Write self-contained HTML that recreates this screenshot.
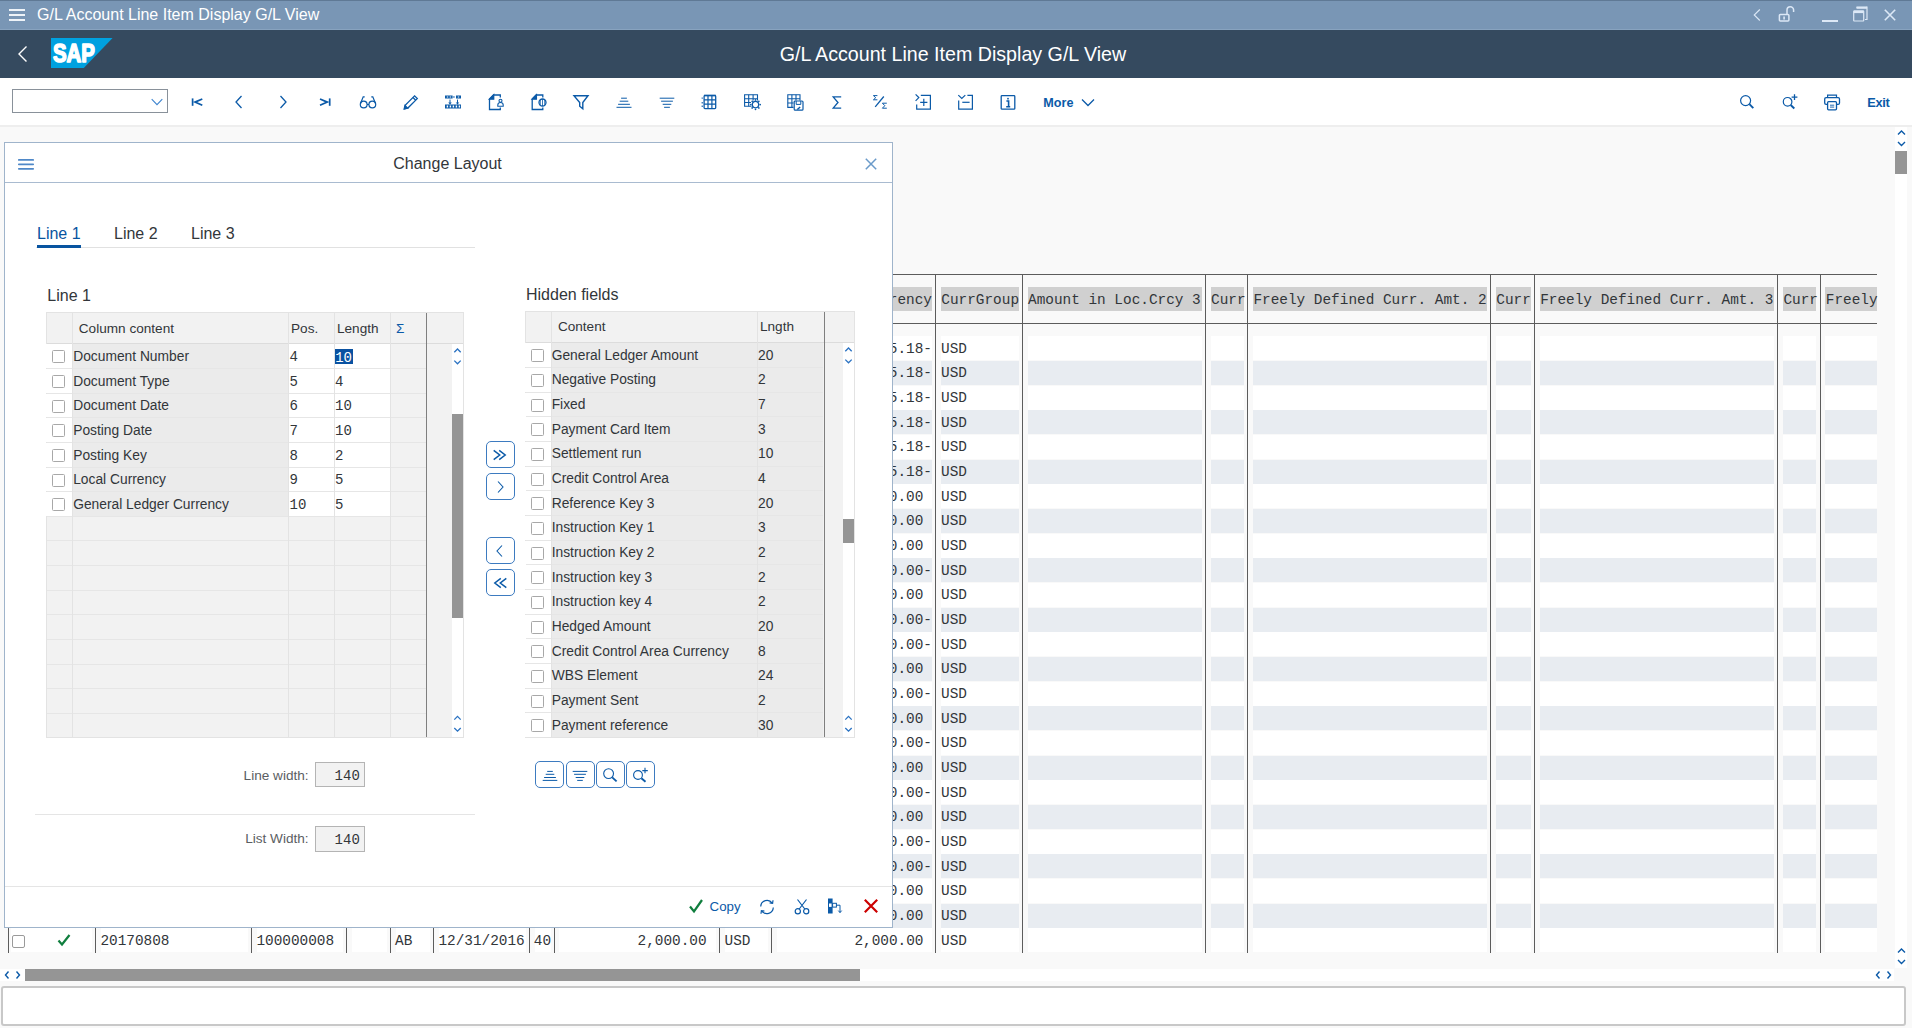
<!DOCTYPE html><html><head><meta charset="utf-8"><style>
html,body{margin:0;padding:0;width:1912px;height:1028px;overflow:hidden;background:#f9f9f9;position:relative}
.t{position:absolute;white-space:pre}
.b{position:absolute}
</style></head><body>
<div class="b" style="left:0.00px;top:0.00px;width:1912.00px;height:30.00px;background:#7996b5;"></div>
<div class="b" style="left:0.00px;top:0.00px;width:1912.00px;height:1.00px;background:#5f7995;"></div>
<div class="b" style="left:0.00px;top:29.00px;width:1912.00px;height:1.00px;background:#88a3bf;"></div>
<div class="b" style="left:9.00px;top:9.00px;width:16.00px;height:1.60px;background:#eef3f8;"></div>
<div class="b" style="left:9.00px;top:14.00px;width:16.00px;height:1.60px;background:#eef3f8;"></div>
<div class="b" style="left:9.00px;top:19.00px;width:16.00px;height:1.60px;background:#eef3f8;"></div>
<div class="t" style="left:37.00px;top:6.66px;font:normal 16px/16px 'Liberation Sans', sans-serif;color:#ffffff;">G/L Account Line Item Display G/L View</div>
<div class="b" style="left:0.00px;top:30.00px;width:1912.00px;height:48.00px;background:#354a5f;"></div>
<div class="t" style="left:453.00px;width:1000px;text-align:center;top:44.97px;font:normal 19.65px/19.65px 'Liberation Sans', sans-serif;color:#ffffff;">G/L Account Line Item Display G/L View</div>
<div class="b" style="left:0.00px;top:78.00px;width:1912.00px;height:47.00px;background:#ffffff;"></div>
<div class="b" style="left:0.00px;top:125.00px;width:1912.00px;height:2.00px;background:#eeeeee;"></div>
<div class="b" style="left:12.00px;top:89.00px;width:156.00px;height:24.00px;background:#ffffff;box-sizing:border-box;border:1px solid #89919a;"></div>
<svg class="b" style="left:148.30px;top:93.00px;" width="18" height="18" viewBox="-9.0 -9.0 18 18"><g fill="none" stroke="#3d84cf" stroke-width="1.1" stroke-linecap="butt" stroke-linejoin="miter"><path d="M-5.3 -2.8 L0 2.6 L5.3 -2.8"/></g></svg>
<svg class="b" style="left:188.40px;top:93.30px;" width="18" height="18" viewBox="-9.0 -9.0 18 18"><g fill="none" stroke="#0b5aa8" stroke-width="1.3" stroke-linecap="butt" stroke-linejoin="miter"><path d="M-4.4 -3.6 V3.8" stroke-width="1.7"/><path d="M5.3 -3 L-2 0.1 L5.3 3.2" stroke-width="1.7"/></g></svg>
<svg class="b" style="left:230.20px;top:93.30px;" width="18" height="18" viewBox="-9.0 -9.0 18 18"><g fill="none" stroke="#0b5aa8" stroke-width="1.3" stroke-linecap="butt" stroke-linejoin="miter"><path d="M2.5 -6 L-3 0 L2.5 6"/></g></svg>
<svg class="b" style="left:274.20px;top:93.30px;" width="18" height="18" viewBox="-9.0 -9.0 18 18"><g fill="none" stroke="#0b5aa8" stroke-width="1.3" stroke-linecap="butt" stroke-linejoin="miter"><path d="M-2.5 -6 L3 0 L-2.5 6"/></g></svg>
<svg class="b" style="left:316.30px;top:93.30px;" width="18" height="18" viewBox="-9.0 -9.0 18 18"><g fill="none" stroke="#0b5aa8" stroke-width="1.3" stroke-linecap="butt" stroke-linejoin="miter"><path d="M4.7 -3.6 V3.8" stroke-width="1.7"/><path d="M-5 -3 L2.3 0.1 L-5 3.2" stroke-width="1.7"/></g></svg>
<svg class="b" style="left:359.00px;top:93.30px;" width="18" height="18" viewBox="-9.0 -9.0 18 18"><g fill="none" stroke="#0b5aa8" stroke-width="1.2" stroke-linecap="butt" stroke-linejoin="miter"><circle cx="-4.3" cy="2.5" r="3.4"/><circle cx="4.3" cy="2.5" r="3.4"/><path d="M-1 2.5 H1"/><path d="M-7.5 1.5 L-4.8 -5.2 L-3.3 -5.2 M7.5 1.5 L4.8 -5.2 L3.3 -5.2"/></g></svg>
<svg class="b" style="left:401.50px;top:93.30px;" width="18" height="18" viewBox="-9.0 -9.0 18 18"><g fill="none" stroke="#0b5aa8" stroke-width="1.3" stroke-linecap="butt" stroke-linejoin="miter"><path d="M-6.5 6.8 L-5.6 3.1 L3.6 -6.1 L6.3 -3.4 L-2.9 5.8 Z"/><path d="M-6.8 7 L-6 3.6 L-3.4 6.2 Z" fill="#0b5aa8"/><path d="M2 -4.5 L4.7 -1.8"/></g></svg>
<svg class="b" style="left:444.10px;top:93.30px;" width="18" height="18" viewBox="-9.0 -9.0 18 18"><g fill="none" stroke="#0b5aa8" stroke-width="1.3" stroke-linecap="butt" stroke-linejoin="miter"><path fill-rule="evenodd" fill="#0b5aa8" stroke="none" d="M-8 -6.6 H-0.4 V-3.5 H-8 Z M-6.2 -5.6 h1.4 v1.1 h-1.4 ZM-3.3 -5.6 h1.4 v1.1 h-1.4 Z M3 -6.6 H8 V-3.5 H3 Z M4.8 -5.6 h1.4 v1.1 h-1.4 Z M0.4 -6 L2.2 -5 L0.4 -4 Z M-8 2.5 H8 V6.6 H-8 Z M-6.3 3.6 h1.4 v1.9 h-1.4 ZM-3.3 3.6 h1.4 v1.9 h-1.4 ZM-0.3 3.6 h1.4 v1.9 h-1.4 ZM2.7 3.6 h1.4 v1.9 h-1.4 ZM5.7 3.6 h1.4 v1.9 h-1.4 Z M-4.8 0.4 H-1.2 L-3 2.5 Z M2.7 0.4 H6.3 L4.5 2.5 Z"/><path d="M-3 -2.4 V1 M4.5 -2.4 V1" stroke-width="1"/></g></svg>
<svg class="b" style="left:486.50px;top:93.30px;" width="18" height="18" viewBox="-9.0 -9.0 18 18"><g fill="none" stroke="#0b5aa8" stroke-width="1.3" stroke-linecap="butt" stroke-linejoin="miter"><path d="M4.3 -4.6 V-7 H-2.5 L-6.5 -3 V7.5 H4.3 V5.6"/><path d="M-6.5 -2.8 L-2.3 -2.8 L-2.3 -7.2 Z" fill="#0b5aa8"/><circle cx="4.5" cy="-1.2" r="1.5" stroke-width="1.1"/><path d="M1.8 4.3 V3 A2.7 2.5 0 0 1 7.2 3 V4.3 Z" stroke-width="1.1"/></g></svg>
<svg class="b" style="left:529.50px;top:93.30px;" width="18" height="18" viewBox="-9.0 -9.0 18 18"><g fill="none" stroke="#0b5aa8" stroke-width="1.3" stroke-linecap="butt" stroke-linejoin="miter"><path d="M3.8 -4.6 V-7 H-2.8 L-6.8 -3 V7.5 H3.8 V5.6"/><path d="M-6.8 -2.8 L-2.6 -2.8 L-2.6 -7.2 Z" fill="#0b5aa8"/><circle cx="3.5" cy="0.5" r="3.5" stroke-width="1.3"/><path d="M3.5 -3 V4 M1.3 -2.3 V3.3 M5.7 -2.3 V3.3" stroke-width="0.8"/></g></svg>
<svg class="b" style="left:572.20px;top:93.30px;" width="18" height="18" viewBox="-9.0 -9.0 18 18"><g fill="none" stroke="#0b5aa8" stroke-width="1.4" stroke-linecap="butt" stroke-linejoin="miter"><path d="M-7 -6.2 H7 L1.8 0.5 V6.8 L-1.3 4.2 V0.5 Z"/></g></svg>
<svg class="b" style="left:615.10px;top:93.30px;" width="18" height="18" viewBox="-9.0 -9.0 18 18"><g fill="none" stroke="#0b5aa8" stroke-width="1.0" stroke-linecap="butt" stroke-linejoin="miter"><path d="M-2.9 -3.8 H2.9 M-4.3 -0.8 H4.3 M-5.9 2.3 H5.9 M-7.5 5.3 H7.5"/></g></svg>
<svg class="b" style="left:657.70px;top:93.30px;" width="18" height="18" viewBox="-9.0 -9.0 18 18"><g fill="none" stroke="#0b5aa8" stroke-width="1.0" stroke-linecap="butt" stroke-linejoin="miter"><path d="M-7.3 -3.8 H7.3 M-5.9 -0.8 H5.9 M-4.3 2.3 H4.3 M-2.9 5.3 H2.9"/></g></svg>
<svg class="b" style="left:700.40px;top:93.30px;" width="18" height="18" viewBox="-9.0 -9.0 18 18"><g fill="none" stroke="#0b5aa8" stroke-width="1.3" stroke-linecap="butt" stroke-linejoin="miter"><rect x="-4.9" y="-6.4" width="11.6" height="13" rx="0.8" stroke-width="1.3"/><path d="M-1 -6.4 V6.6 M2.9 -6.4 V6.6 M-4.9 -2.1 H6.7 M-4.9 2.2 H6.7" stroke-width="1.2"/><path d="M-4.9 -6.6 h11.6" stroke-width="1.5"/><path d="M-6.8 -4.6 V-3.2 M-6.8 0 V1.4 M-6.8 3.6 V5" stroke-width="1.1"/></g></svg>
<svg class="b" style="left:742.50px;top:93.30px;" width="18" height="18" viewBox="-9.0 -9.0 18 18"><g fill="none" stroke="#0b5aa8" stroke-width="1.3" stroke-linecap="butt" stroke-linejoin="miter"><path d="M-0.5 4.3 H-7.4 V-7.2 H5.5 V-1.5" stroke-width="1.1"/><path d="M-7.4 -3.3 H5.5 M-7.4 0.5 H-1 M-3.3 -7.2 V4.3 M1.1 -7.2 V-1.5" stroke-width="1.1"/><circle cx="3.5" cy="2.6" r="3.2" stroke-width="1.3" fill="#fff"/><circle cx="8.20" cy="2.60" r="0.85" fill="#0b5aa8" stroke="none"/><circle cx="6.82" cy="5.92" r="0.85" fill="#0b5aa8" stroke="none"/><circle cx="3.50" cy="7.30" r="0.85" fill="#0b5aa8" stroke="none"/><circle cx="0.18" cy="5.92" r="0.85" fill="#0b5aa8" stroke="none"/><circle cx="-1.20" cy="2.60" r="0.85" fill="#0b5aa8" stroke="none"/><circle cx="0.18" cy="-0.72" r="0.85" fill="#0b5aa8" stroke="none"/><circle cx="3.50" cy="-2.10" r="0.85" fill="#0b5aa8" stroke="none"/><circle cx="6.82" cy="-0.72" r="0.85" fill="#0b5aa8" stroke="none"/></g></svg>
<svg class="b" style="left:785.50px;top:93.30px;" width="18" height="18" viewBox="-9.0 -9.0 18 18"><g fill="none" stroke="#0b5aa8" stroke-width="1.3" stroke-linecap="butt" stroke-linejoin="miter"><path d="M-1.5 5.4 H-7.2 V-7.2 H5 V-1.5" stroke-width="1.1"/><path d="M-7.2 -3.3 H5 M-7.2 1 H-1.5 M-3.1 -7.2 V5.4 M1 -7.2 V-1.5" stroke-width="1.1"/><rect x="-0.8" y="-1" width="8.8" height="9.2" rx="1" stroke-width="1.2" fill="#fff"/><path d="M1.2 -1 V2.4 H5.8 V-1" stroke-width="1"/><path d="M2.3 7.6 L5.2 5" stroke-width="1.4"/></g></svg>
<svg class="b" style="left:827.80px;top:93.30px;" width="18" height="18" viewBox="-9.0 -9.0 18 18"><g fill="none" stroke="#0b5aa8" stroke-width="1.3" stroke-linecap="butt" stroke-linejoin="miter"><path d="M4.2 -5.2 H-3.8 L1 0.5 L-3.8 6.2 H4.2"/></g></svg>
<svg class="b" style="left:871.20px;top:93.30px;" width="18" height="18" viewBox="-9.0 -9.0 18 18"><g fill="none" stroke="#0b5aa8" stroke-width="1.3" stroke-linecap="butt" stroke-linejoin="miter"><path d="M-2.6 -6.4 H-6.6 L-4.3 -4.3 L-6.6 -2.2 H-2.6" stroke-width="1"/><path d="M6.8 1.2 H2.4 L4.8 3.7 L2.4 6.2 H6.8" stroke-width="1"/><path d="M3.8 -5.5 L-4.8 4.8" stroke-width="1.3"/></g></svg>
<svg class="b" style="left:913.80px;top:93.30px;" width="18" height="18" viewBox="-9.0 -9.0 18 18"><g fill="none" stroke="#0b5aa8" stroke-width="1.3" stroke-linecap="butt" stroke-linejoin="miter"><path d="M-7.4 -7.6 L-4.2 -4.4 L-7.4 -1.2" stroke-width="1.2"/><path d="M-2.2 -6.7 H7.4 V7.2 H-6.3 V2.6" stroke-width="1.2"/><path d="M-2.8 0.3 H4.4 M0.8 -3.3 V3.9" stroke-width="1.2"/></g></svg>
<svg class="b" style="left:956.40px;top:93.30px;" width="18" height="18" viewBox="-9.0 -9.0 18 18"><g fill="none" stroke="#0b5aa8" stroke-width="1.3" stroke-linecap="butt" stroke-linejoin="miter"><path d="M-6.7 -6.9 L-3.2 -3.6 L0.3 -6.9" stroke-width="1.2"/><path d="M2.4 -6.7 H7.4 V7.2 H-6.3 V-1.4" stroke-width="1.2"/><path d="M-2.7 0.3 H4.6" stroke-width="1.2"/></g></svg>
<svg class="b" style="left:999.20px;top:93.30px;" width="18" height="18" viewBox="-9.0 -9.0 18 18"><g fill="none" stroke="#0b5aa8" stroke-width="1.3" stroke-linecap="butt" stroke-linejoin="miter"><rect x="-6.8" y="-6.4" width="13.6" height="13.6" rx="0.8"/><circle cx="0" cy="-3.3" r="0.9" fill="#0b5aa8" stroke="none"/><path d="M-1.6 -1 H0.6 V4.6 M-1.8 4.8 H2.2" stroke-width="1.6"/></g></svg>
<div class="t" style="left:1043.30px;top:96.93px;font:bold 12.6px/12.6px 'Liberation Sans', sans-serif;color:#0b5aa8;">More</div>
<svg class="b" style="left:1079.20px;top:93.30px;" width="18" height="18" viewBox="-9.0 -9.0 18 18"><g fill="none" stroke="#0b5aa8" stroke-width="1.3" stroke-linecap="butt" stroke-linejoin="miter"><path d="M-6 -2.5 L0 3.5 L6 -2.5"/></g></svg>
<svg class="b" style="left:1738.00px;top:93.30px;" width="18" height="18" viewBox="-9.0 -9.0 18 18"><g fill="none" stroke="#0b5aa8" stroke-width="1.3" stroke-linecap="butt" stroke-linejoin="miter"><circle cx="-1.4" cy="-1.4" r="5" stroke-width="1.2"/><path d="M2.4 2.2 L6.3 6.1" stroke-width="1.9"/></g></svg>
<svg class="b" style="left:1780.50px;top:93.30px;" width="18" height="18" viewBox="-9.0 -9.0 18 18"><g fill="none" stroke="#0b5aa8" stroke-width="1.3" stroke-linecap="butt" stroke-linejoin="miter"><circle cx="-2.4" cy="-0.2" r="4.3" stroke-width="1.2"/><path d="M0.7 3 L4.3 6.5" stroke-width="1.9"/><path d="M4.5 -7.7 V-1.9 M1.6 -4.8 H7.4" stroke-width="1.3"/></g></svg>
<svg class="b" style="left:1823.00px;top:93.30px;" width="18" height="18" viewBox="-9.0 -9.0 18 18"><g fill="none" stroke="#0b5aa8" stroke-width="1.3" stroke-linecap="butt" stroke-linejoin="miter"><rect x="-7.3" y="-4.3" width="14.8" height="6.6" rx="1.4" stroke-width="1.3"/><path d="M-4.4 -4.3 V-6.9 H4.5 V-4.3" stroke-width="1.2"/><rect x="-4.4" y="-0.3" width="8.9" height="8.1" rx="1" fill="#fff" stroke-width="1.3"/><path d="M-2 3.2 H2.2 M-2 5.1 H2.2" stroke-width="0.9"/></g></svg>
<div class="t" style="left:1867.30px;top:96.56px;font:bold 12.8px/12.8px 'Liberation Sans', sans-serif;color:#0b5aa8;letter-spacing:-0.3px;">Exit</div>
<svg class="b" style="left:1747.60px;top:6.30px;" width="18" height="18" viewBox="-9.0 -9.0 18 18"><g fill="none" stroke="#dce8f6" stroke-width="1.1" stroke-linecap="butt" stroke-linejoin="miter"><path d="M2.8 -5.5 L-2.8 0 L2.8 5.5"/></g></svg>
<svg class="b" style="left:1778.00px;top:5.00px;" width="18" height="18" viewBox="-9.0 -9.0 18 18"><g fill="none" stroke="#dce8f6" stroke-width="1.5" stroke-linecap="butt" stroke-linejoin="miter"><rect x="-7.6" y="0.5" width="9.5" height="6.5" rx="1"/><path d="M0 0.5 V-4 A3.3 3.3 0 0 1 6.6 -4 V-2"/><path d="M-2.9 2.5 V5.5" stroke-width="1.6"/></g></svg>
<div class="b" style="left:1822.00px;top:19.60px;width:15.80px;height:2.00px;background:#dce8f6;"></div>
<svg class="b" style="left:1850.80px;top:5.30px;" width="18" height="18" viewBox="-9.0 -9.0 18 18"><g fill="none" stroke="#dce8f6" stroke-width="1.3" stroke-linecap="butt" stroke-linejoin="miter"><rect x="-6.3" y="-3" width="10" height="10" rx="0.5" stroke-width="1.2"/><path d="M-6.3 -2.2 H3.7" stroke-width="2.6"/><path d="M-3.5 -6.6 H7 M7 -7.5 V5.5 H5" stroke-width="1.2"/><path d="M-3.5 -6.3 H7" stroke-width="2.2"/></g></svg>
<svg class="b" style="left:1881.20px;top:5.50px;" width="18" height="18" viewBox="-9.0 -9.0 18 18"><g fill="none" stroke="#dce8f6" stroke-width="1.6" stroke-linecap="butt" stroke-linejoin="miter"><path d="M-5.2 -5.2 L5.2 5.2 M5.2 -5.2 L-5.2 5.2"/></g></svg>
<svg class="b" style="left:14.00px;top:45.00px;" width="18" height="18" viewBox="-9.0 -9.0 18 18"><g fill="none" stroke="#ffffff" stroke-width="1.4" stroke-linecap="butt" stroke-linejoin="miter"><path d="M3.5 -7.5 L-4 0 L3.5 7.5"/></g></svg>
<svg class="b" style="left:51.00px;top:37.80px;" width="61.6" height="30.4" viewBox="0 0 61.6 30.4"><path d="M0 0 H61.6 L32.4 30.4 H0 Z" fill="#00a1e0"/><text x="2" y="23.6" font-family="Liberation Sans" font-weight="bold" font-size="25.5" fill="#fff" stroke="#fff" stroke-width="1.6" stroke-linejoin="round" textLength="42" lengthAdjust="spacingAndGlyphs">SAP</text></svg>
<div class="b" style="left:8.80px;top:274.00px;width:1868.20px;height:1.20px;background:#5c5c5c;"></div>
<div class="b" style="left:8.80px;top:323.00px;width:1868.20px;height:1.20px;background:#5c5c5c;"></div>
<div class="b" style="left:8.00px;top:274.00px;width:1.20px;height:678.50px;background:#5c5c5c;"></div>
<div class="b" style="left:95.00px;top:274.00px;width:1.20px;height:678.50px;background:#5c5c5c;"></div>
<div class="b" style="left:251.00px;top:274.00px;width:1.20px;height:678.50px;background:#5c5c5c;"></div>
<div class="b" style="left:346.00px;top:274.00px;width:1.20px;height:678.50px;background:#5c5c5c;"></div>
<div class="b" style="left:390.00px;top:274.00px;width:1.20px;height:678.50px;background:#5c5c5c;"></div>
<div class="b" style="left:433.00px;top:274.00px;width:1.20px;height:678.50px;background:#5c5c5c;"></div>
<div class="b" style="left:529.00px;top:274.00px;width:1.20px;height:678.50px;background:#5c5c5c;"></div>
<div class="b" style="left:554.00px;top:274.00px;width:1.20px;height:678.50px;background:#5c5c5c;"></div>
<div class="b" style="left:719.00px;top:274.00px;width:1.20px;height:678.50px;background:#5c5c5c;"></div>
<div class="b" style="left:771.00px;top:274.00px;width:1.20px;height:678.50px;background:#5c5c5c;"></div>
<div class="b" style="left:935.00px;top:274.00px;width:1.20px;height:678.50px;background:#5c5c5c;"></div>
<div class="b" style="left:1022.00px;top:274.00px;width:1.20px;height:678.50px;background:#5c5c5c;"></div>
<div class="b" style="left:1205.00px;top:274.00px;width:1.20px;height:678.50px;background:#5c5c5c;"></div>
<div class="b" style="left:1247.00px;top:274.00px;width:1.20px;height:678.50px;background:#5c5c5c;"></div>
<div class="b" style="left:1490.00px;top:274.00px;width:1.20px;height:678.50px;background:#5c5c5c;"></div>
<div class="b" style="left:1534.00px;top:274.00px;width:1.20px;height:678.50px;background:#5c5c5c;"></div>
<div class="b" style="left:1777.00px;top:274.00px;width:1.20px;height:678.50px;background:#5c5c5c;"></div>
<div class="b" style="left:1820.00px;top:274.00px;width:1.20px;height:678.50px;background:#5c5c5c;"></div>
<div class="b" style="left:776.90px;top:287.00px;width:155.10px;height:24.00px;background:#d0d0d0;"></div>
<div class="t" style="right:980.00px;top:293.16px;font:normal 14.4px/14.4px 'Liberation Mono', monospace;color:#32363a;">Currency</div>
<div class="b" style="left:940.80px;top:287.00px;width:77.90px;height:24.00px;background:#d0d0d0;"></div>
<div class="t" style="left:941.30px;top:293.16px;font:normal 14.4px/14.4px 'Liberation Mono', monospace;color:#32363a;">CurrGroup</div>
<div class="b" style="left:1027.50px;top:287.00px;width:174.30px;height:24.00px;background:#d0d0d0;"></div>
<div class="t" style="left:1028.00px;top:293.16px;font:normal 14.4px/14.4px 'Liberation Mono', monospace;color:#32363a;">Amount in Loc.Crcy 3</div>
<div class="b" style="left:1210.60px;top:287.00px;width:33.50px;height:24.00px;background:#d0d0d0;"></div>
<div class="t" style="left:1211.10px;top:293.16px;font:normal 14.4px/14.4px 'Liberation Mono', monospace;color:#32363a;">Curr</div>
<div class="b" style="left:1252.90px;top:287.00px;width:234.10px;height:24.00px;background:#d0d0d0;"></div>
<div class="t" style="left:1253.40px;top:293.16px;font:normal 14.4px/14.4px 'Liberation Mono', monospace;color:#32363a;">Freely Defined Curr. Amt. 2</div>
<div class="b" style="left:1495.80px;top:287.00px;width:35.10px;height:24.00px;background:#d0d0d0;"></div>
<div class="t" style="left:1496.30px;top:293.16px;font:normal 14.4px/14.4px 'Liberation Mono', monospace;color:#32363a;">Curr</div>
<div class="b" style="left:1539.70px;top:287.00px;width:234.40px;height:24.00px;background:#d0d0d0;"></div>
<div class="t" style="left:1540.20px;top:293.16px;font:normal 14.4px/14.4px 'Liberation Mono', monospace;color:#32363a;">Freely Defined Curr. Amt. 3</div>
<div class="b" style="left:1782.90px;top:287.00px;width:33.60px;height:24.00px;background:#d0d0d0;"></div>
<div class="t" style="left:1783.40px;top:293.16px;font:normal 14.4px/14.4px 'Liberation Mono', monospace;color:#32363a;">Curr</div>
<div class="b" style="left:1825.30px;top:287.00px;width:51.70px;height:24.00px;background:#d0d0d0;"></div>
<div class="t" style="left:1825.80px;top:293.16px;font:normal 14.4px/14.4px 'Liberation Mono', monospace;color:#32363a;">Freely</div>
<div class="b" style="left:10.80px;top:336.30px;width:81.10px;height:24.00px;background:#ffffff;"></div>
<div class="b" style="left:100.70px;top:336.30px;width:147.40px;height:24.00px;background:#ffffff;"></div>
<div class="b" style="left:256.90px;top:336.30px;width:86.10px;height:24.00px;background:#ffffff;"></div>
<div class="b" style="left:351.80px;top:336.30px;width:35.10px;height:24.00px;background:#ffffff;"></div>
<div class="b" style="left:395.70px;top:336.30px;width:34.10px;height:24.00px;background:#ffffff;"></div>
<div class="b" style="left:438.60px;top:336.30px;width:87.20px;height:24.00px;background:#ffffff;"></div>
<div class="b" style="left:534.60px;top:336.30px;width:16.00px;height:24.00px;background:#ffffff;"></div>
<div class="b" style="left:559.40px;top:336.30px;width:156.50px;height:24.00px;background:#ffffff;"></div>
<div class="b" style="left:724.70px;top:336.30px;width:43.40px;height:24.00px;background:#ffffff;"></div>
<div class="b" style="left:776.90px;top:336.30px;width:155.10px;height:24.00px;background:#ffffff;"></div>
<div class="b" style="left:940.80px;top:336.30px;width:77.90px;height:24.00px;background:#ffffff;"></div>
<div class="b" style="left:1027.50px;top:336.30px;width:174.30px;height:24.00px;background:#ffffff;"></div>
<div class="b" style="left:1210.60px;top:336.30px;width:33.50px;height:24.00px;background:#ffffff;"></div>
<div class="b" style="left:1252.90px;top:336.30px;width:234.10px;height:24.00px;background:#ffffff;"></div>
<div class="b" style="left:1495.80px;top:336.30px;width:35.10px;height:24.00px;background:#ffffff;"></div>
<div class="b" style="left:1539.70px;top:336.30px;width:234.40px;height:24.00px;background:#ffffff;"></div>
<div class="b" style="left:1782.90px;top:336.30px;width:33.60px;height:24.00px;background:#ffffff;"></div>
<div class="b" style="left:1825.30px;top:336.30px;width:51.70px;height:24.00px;background:#ffffff;"></div>
<div class="t" style="right:980.00px;top:341.56px;font:normal 14.4px/14.4px 'Liberation Mono', monospace;color:#32363a;">1,234,375.18-</div>
<div class="t" style="left:941.00px;top:341.56px;font:normal 14.4px/14.4px 'Liberation Mono', monospace;color:#32363a;">USD</div>
<div class="b" style="left:10.80px;top:360.97px;width:81.10px;height:24.00px;background:#e8ecf1;"></div>
<div class="b" style="left:100.70px;top:360.97px;width:147.40px;height:24.00px;background:#e8ecf1;"></div>
<div class="b" style="left:256.90px;top:360.97px;width:86.10px;height:24.00px;background:#e8ecf1;"></div>
<div class="b" style="left:351.80px;top:360.97px;width:35.10px;height:24.00px;background:#e8ecf1;"></div>
<div class="b" style="left:395.70px;top:360.97px;width:34.10px;height:24.00px;background:#e8ecf1;"></div>
<div class="b" style="left:438.60px;top:360.97px;width:87.20px;height:24.00px;background:#e8ecf1;"></div>
<div class="b" style="left:534.60px;top:360.97px;width:16.00px;height:24.00px;background:#e8ecf1;"></div>
<div class="b" style="left:559.40px;top:360.97px;width:156.50px;height:24.00px;background:#e8ecf1;"></div>
<div class="b" style="left:724.70px;top:360.97px;width:43.40px;height:24.00px;background:#e8ecf1;"></div>
<div class="b" style="left:776.90px;top:360.97px;width:155.10px;height:24.00px;background:#e8ecf1;"></div>
<div class="b" style="left:940.80px;top:360.97px;width:77.90px;height:24.00px;background:#e8ecf1;"></div>
<div class="b" style="left:1027.50px;top:360.97px;width:174.30px;height:24.00px;background:#e8ecf1;"></div>
<div class="b" style="left:1210.60px;top:360.97px;width:33.50px;height:24.00px;background:#e8ecf1;"></div>
<div class="b" style="left:1252.90px;top:360.97px;width:234.10px;height:24.00px;background:#e8ecf1;"></div>
<div class="b" style="left:1495.80px;top:360.97px;width:35.10px;height:24.00px;background:#e8ecf1;"></div>
<div class="b" style="left:1539.70px;top:360.97px;width:234.40px;height:24.00px;background:#e8ecf1;"></div>
<div class="b" style="left:1782.90px;top:360.97px;width:33.60px;height:24.00px;background:#e8ecf1;"></div>
<div class="b" style="left:1825.30px;top:360.97px;width:51.70px;height:24.00px;background:#e8ecf1;"></div>
<div class="t" style="right:980.00px;top:366.23px;font:normal 14.4px/14.4px 'Liberation Mono', monospace;color:#32363a;">1,234,375.18-</div>
<div class="t" style="left:941.00px;top:366.23px;font:normal 14.4px/14.4px 'Liberation Mono', monospace;color:#32363a;">USD</div>
<div class="b" style="left:10.80px;top:385.64px;width:81.10px;height:24.00px;background:#ffffff;"></div>
<div class="b" style="left:100.70px;top:385.64px;width:147.40px;height:24.00px;background:#ffffff;"></div>
<div class="b" style="left:256.90px;top:385.64px;width:86.10px;height:24.00px;background:#ffffff;"></div>
<div class="b" style="left:351.80px;top:385.64px;width:35.10px;height:24.00px;background:#ffffff;"></div>
<div class="b" style="left:395.70px;top:385.64px;width:34.10px;height:24.00px;background:#ffffff;"></div>
<div class="b" style="left:438.60px;top:385.64px;width:87.20px;height:24.00px;background:#ffffff;"></div>
<div class="b" style="left:534.60px;top:385.64px;width:16.00px;height:24.00px;background:#ffffff;"></div>
<div class="b" style="left:559.40px;top:385.64px;width:156.50px;height:24.00px;background:#ffffff;"></div>
<div class="b" style="left:724.70px;top:385.64px;width:43.40px;height:24.00px;background:#ffffff;"></div>
<div class="b" style="left:776.90px;top:385.64px;width:155.10px;height:24.00px;background:#ffffff;"></div>
<div class="b" style="left:940.80px;top:385.64px;width:77.90px;height:24.00px;background:#ffffff;"></div>
<div class="b" style="left:1027.50px;top:385.64px;width:174.30px;height:24.00px;background:#ffffff;"></div>
<div class="b" style="left:1210.60px;top:385.64px;width:33.50px;height:24.00px;background:#ffffff;"></div>
<div class="b" style="left:1252.90px;top:385.64px;width:234.10px;height:24.00px;background:#ffffff;"></div>
<div class="b" style="left:1495.80px;top:385.64px;width:35.10px;height:24.00px;background:#ffffff;"></div>
<div class="b" style="left:1539.70px;top:385.64px;width:234.40px;height:24.00px;background:#ffffff;"></div>
<div class="b" style="left:1782.90px;top:385.64px;width:33.60px;height:24.00px;background:#ffffff;"></div>
<div class="b" style="left:1825.30px;top:385.64px;width:51.70px;height:24.00px;background:#ffffff;"></div>
<div class="t" style="right:980.00px;top:390.90px;font:normal 14.4px/14.4px 'Liberation Mono', monospace;color:#32363a;">1,234,375.18-</div>
<div class="t" style="left:941.00px;top:390.90px;font:normal 14.4px/14.4px 'Liberation Mono', monospace;color:#32363a;">USD</div>
<div class="b" style="left:10.80px;top:410.31px;width:81.10px;height:24.00px;background:#e8ecf1;"></div>
<div class="b" style="left:100.70px;top:410.31px;width:147.40px;height:24.00px;background:#e8ecf1;"></div>
<div class="b" style="left:256.90px;top:410.31px;width:86.10px;height:24.00px;background:#e8ecf1;"></div>
<div class="b" style="left:351.80px;top:410.31px;width:35.10px;height:24.00px;background:#e8ecf1;"></div>
<div class="b" style="left:395.70px;top:410.31px;width:34.10px;height:24.00px;background:#e8ecf1;"></div>
<div class="b" style="left:438.60px;top:410.31px;width:87.20px;height:24.00px;background:#e8ecf1;"></div>
<div class="b" style="left:534.60px;top:410.31px;width:16.00px;height:24.00px;background:#e8ecf1;"></div>
<div class="b" style="left:559.40px;top:410.31px;width:156.50px;height:24.00px;background:#e8ecf1;"></div>
<div class="b" style="left:724.70px;top:410.31px;width:43.40px;height:24.00px;background:#e8ecf1;"></div>
<div class="b" style="left:776.90px;top:410.31px;width:155.10px;height:24.00px;background:#e8ecf1;"></div>
<div class="b" style="left:940.80px;top:410.31px;width:77.90px;height:24.00px;background:#e8ecf1;"></div>
<div class="b" style="left:1027.50px;top:410.31px;width:174.30px;height:24.00px;background:#e8ecf1;"></div>
<div class="b" style="left:1210.60px;top:410.31px;width:33.50px;height:24.00px;background:#e8ecf1;"></div>
<div class="b" style="left:1252.90px;top:410.31px;width:234.10px;height:24.00px;background:#e8ecf1;"></div>
<div class="b" style="left:1495.80px;top:410.31px;width:35.10px;height:24.00px;background:#e8ecf1;"></div>
<div class="b" style="left:1539.70px;top:410.31px;width:234.40px;height:24.00px;background:#e8ecf1;"></div>
<div class="b" style="left:1782.90px;top:410.31px;width:33.60px;height:24.00px;background:#e8ecf1;"></div>
<div class="b" style="left:1825.30px;top:410.31px;width:51.70px;height:24.00px;background:#e8ecf1;"></div>
<div class="t" style="right:980.00px;top:415.57px;font:normal 14.4px/14.4px 'Liberation Mono', monospace;color:#32363a;">1,234,375.18-</div>
<div class="t" style="left:941.00px;top:415.57px;font:normal 14.4px/14.4px 'Liberation Mono', monospace;color:#32363a;">USD</div>
<div class="b" style="left:10.80px;top:434.98px;width:81.10px;height:24.00px;background:#ffffff;"></div>
<div class="b" style="left:100.70px;top:434.98px;width:147.40px;height:24.00px;background:#ffffff;"></div>
<div class="b" style="left:256.90px;top:434.98px;width:86.10px;height:24.00px;background:#ffffff;"></div>
<div class="b" style="left:351.80px;top:434.98px;width:35.10px;height:24.00px;background:#ffffff;"></div>
<div class="b" style="left:395.70px;top:434.98px;width:34.10px;height:24.00px;background:#ffffff;"></div>
<div class="b" style="left:438.60px;top:434.98px;width:87.20px;height:24.00px;background:#ffffff;"></div>
<div class="b" style="left:534.60px;top:434.98px;width:16.00px;height:24.00px;background:#ffffff;"></div>
<div class="b" style="left:559.40px;top:434.98px;width:156.50px;height:24.00px;background:#ffffff;"></div>
<div class="b" style="left:724.70px;top:434.98px;width:43.40px;height:24.00px;background:#ffffff;"></div>
<div class="b" style="left:776.90px;top:434.98px;width:155.10px;height:24.00px;background:#ffffff;"></div>
<div class="b" style="left:940.80px;top:434.98px;width:77.90px;height:24.00px;background:#ffffff;"></div>
<div class="b" style="left:1027.50px;top:434.98px;width:174.30px;height:24.00px;background:#ffffff;"></div>
<div class="b" style="left:1210.60px;top:434.98px;width:33.50px;height:24.00px;background:#ffffff;"></div>
<div class="b" style="left:1252.90px;top:434.98px;width:234.10px;height:24.00px;background:#ffffff;"></div>
<div class="b" style="left:1495.80px;top:434.98px;width:35.10px;height:24.00px;background:#ffffff;"></div>
<div class="b" style="left:1539.70px;top:434.98px;width:234.40px;height:24.00px;background:#ffffff;"></div>
<div class="b" style="left:1782.90px;top:434.98px;width:33.60px;height:24.00px;background:#ffffff;"></div>
<div class="b" style="left:1825.30px;top:434.98px;width:51.70px;height:24.00px;background:#ffffff;"></div>
<div class="t" style="right:980.00px;top:440.24px;font:normal 14.4px/14.4px 'Liberation Mono', monospace;color:#32363a;">1,234,375.18-</div>
<div class="t" style="left:941.00px;top:440.24px;font:normal 14.4px/14.4px 'Liberation Mono', monospace;color:#32363a;">USD</div>
<div class="b" style="left:10.80px;top:459.65px;width:81.10px;height:24.00px;background:#e8ecf1;"></div>
<div class="b" style="left:100.70px;top:459.65px;width:147.40px;height:24.00px;background:#e8ecf1;"></div>
<div class="b" style="left:256.90px;top:459.65px;width:86.10px;height:24.00px;background:#e8ecf1;"></div>
<div class="b" style="left:351.80px;top:459.65px;width:35.10px;height:24.00px;background:#e8ecf1;"></div>
<div class="b" style="left:395.70px;top:459.65px;width:34.10px;height:24.00px;background:#e8ecf1;"></div>
<div class="b" style="left:438.60px;top:459.65px;width:87.20px;height:24.00px;background:#e8ecf1;"></div>
<div class="b" style="left:534.60px;top:459.65px;width:16.00px;height:24.00px;background:#e8ecf1;"></div>
<div class="b" style="left:559.40px;top:459.65px;width:156.50px;height:24.00px;background:#e8ecf1;"></div>
<div class="b" style="left:724.70px;top:459.65px;width:43.40px;height:24.00px;background:#e8ecf1;"></div>
<div class="b" style="left:776.90px;top:459.65px;width:155.10px;height:24.00px;background:#e8ecf1;"></div>
<div class="b" style="left:940.80px;top:459.65px;width:77.90px;height:24.00px;background:#e8ecf1;"></div>
<div class="b" style="left:1027.50px;top:459.65px;width:174.30px;height:24.00px;background:#e8ecf1;"></div>
<div class="b" style="left:1210.60px;top:459.65px;width:33.50px;height:24.00px;background:#e8ecf1;"></div>
<div class="b" style="left:1252.90px;top:459.65px;width:234.10px;height:24.00px;background:#e8ecf1;"></div>
<div class="b" style="left:1495.80px;top:459.65px;width:35.10px;height:24.00px;background:#e8ecf1;"></div>
<div class="b" style="left:1539.70px;top:459.65px;width:234.40px;height:24.00px;background:#e8ecf1;"></div>
<div class="b" style="left:1782.90px;top:459.65px;width:33.60px;height:24.00px;background:#e8ecf1;"></div>
<div class="b" style="left:1825.30px;top:459.65px;width:51.70px;height:24.00px;background:#e8ecf1;"></div>
<div class="t" style="right:980.00px;top:464.91px;font:normal 14.4px/14.4px 'Liberation Mono', monospace;color:#32363a;">1,234,375.18-</div>
<div class="t" style="left:941.00px;top:464.91px;font:normal 14.4px/14.4px 'Liberation Mono', monospace;color:#32363a;">USD</div>
<div class="b" style="left:10.80px;top:484.32px;width:81.10px;height:24.00px;background:#ffffff;"></div>
<div class="b" style="left:100.70px;top:484.32px;width:147.40px;height:24.00px;background:#ffffff;"></div>
<div class="b" style="left:256.90px;top:484.32px;width:86.10px;height:24.00px;background:#ffffff;"></div>
<div class="b" style="left:351.80px;top:484.32px;width:35.10px;height:24.00px;background:#ffffff;"></div>
<div class="b" style="left:395.70px;top:484.32px;width:34.10px;height:24.00px;background:#ffffff;"></div>
<div class="b" style="left:438.60px;top:484.32px;width:87.20px;height:24.00px;background:#ffffff;"></div>
<div class="b" style="left:534.60px;top:484.32px;width:16.00px;height:24.00px;background:#ffffff;"></div>
<div class="b" style="left:559.40px;top:484.32px;width:156.50px;height:24.00px;background:#ffffff;"></div>
<div class="b" style="left:724.70px;top:484.32px;width:43.40px;height:24.00px;background:#ffffff;"></div>
<div class="b" style="left:776.90px;top:484.32px;width:155.10px;height:24.00px;background:#ffffff;"></div>
<div class="b" style="left:940.80px;top:484.32px;width:77.90px;height:24.00px;background:#ffffff;"></div>
<div class="b" style="left:1027.50px;top:484.32px;width:174.30px;height:24.00px;background:#ffffff;"></div>
<div class="b" style="left:1210.60px;top:484.32px;width:33.50px;height:24.00px;background:#ffffff;"></div>
<div class="b" style="left:1252.90px;top:484.32px;width:234.10px;height:24.00px;background:#ffffff;"></div>
<div class="b" style="left:1495.80px;top:484.32px;width:35.10px;height:24.00px;background:#ffffff;"></div>
<div class="b" style="left:1539.70px;top:484.32px;width:234.40px;height:24.00px;background:#ffffff;"></div>
<div class="b" style="left:1782.90px;top:484.32px;width:33.60px;height:24.00px;background:#ffffff;"></div>
<div class="b" style="left:1825.30px;top:484.32px;width:51.70px;height:24.00px;background:#ffffff;"></div>
<div class="t" style="right:980.00px;top:489.58px;font:normal 14.4px/14.4px 'Liberation Mono', monospace;color:#32363a;">2,000.00.00 </div>
<div class="t" style="left:941.00px;top:489.58px;font:normal 14.4px/14.4px 'Liberation Mono', monospace;color:#32363a;">USD</div>
<div class="b" style="left:10.80px;top:508.99px;width:81.10px;height:24.00px;background:#e8ecf1;"></div>
<div class="b" style="left:100.70px;top:508.99px;width:147.40px;height:24.00px;background:#e8ecf1;"></div>
<div class="b" style="left:256.90px;top:508.99px;width:86.10px;height:24.00px;background:#e8ecf1;"></div>
<div class="b" style="left:351.80px;top:508.99px;width:35.10px;height:24.00px;background:#e8ecf1;"></div>
<div class="b" style="left:395.70px;top:508.99px;width:34.10px;height:24.00px;background:#e8ecf1;"></div>
<div class="b" style="left:438.60px;top:508.99px;width:87.20px;height:24.00px;background:#e8ecf1;"></div>
<div class="b" style="left:534.60px;top:508.99px;width:16.00px;height:24.00px;background:#e8ecf1;"></div>
<div class="b" style="left:559.40px;top:508.99px;width:156.50px;height:24.00px;background:#e8ecf1;"></div>
<div class="b" style="left:724.70px;top:508.99px;width:43.40px;height:24.00px;background:#e8ecf1;"></div>
<div class="b" style="left:776.90px;top:508.99px;width:155.10px;height:24.00px;background:#e8ecf1;"></div>
<div class="b" style="left:940.80px;top:508.99px;width:77.90px;height:24.00px;background:#e8ecf1;"></div>
<div class="b" style="left:1027.50px;top:508.99px;width:174.30px;height:24.00px;background:#e8ecf1;"></div>
<div class="b" style="left:1210.60px;top:508.99px;width:33.50px;height:24.00px;background:#e8ecf1;"></div>
<div class="b" style="left:1252.90px;top:508.99px;width:234.10px;height:24.00px;background:#e8ecf1;"></div>
<div class="b" style="left:1495.80px;top:508.99px;width:35.10px;height:24.00px;background:#e8ecf1;"></div>
<div class="b" style="left:1539.70px;top:508.99px;width:234.40px;height:24.00px;background:#e8ecf1;"></div>
<div class="b" style="left:1782.90px;top:508.99px;width:33.60px;height:24.00px;background:#e8ecf1;"></div>
<div class="b" style="left:1825.30px;top:508.99px;width:51.70px;height:24.00px;background:#e8ecf1;"></div>
<div class="t" style="right:980.00px;top:514.25px;font:normal 14.4px/14.4px 'Liberation Mono', monospace;color:#32363a;">2,000.00.00 </div>
<div class="t" style="left:941.00px;top:514.25px;font:normal 14.4px/14.4px 'Liberation Mono', monospace;color:#32363a;">USD</div>
<div class="b" style="left:10.80px;top:533.66px;width:81.10px;height:24.00px;background:#ffffff;"></div>
<div class="b" style="left:100.70px;top:533.66px;width:147.40px;height:24.00px;background:#ffffff;"></div>
<div class="b" style="left:256.90px;top:533.66px;width:86.10px;height:24.00px;background:#ffffff;"></div>
<div class="b" style="left:351.80px;top:533.66px;width:35.10px;height:24.00px;background:#ffffff;"></div>
<div class="b" style="left:395.70px;top:533.66px;width:34.10px;height:24.00px;background:#ffffff;"></div>
<div class="b" style="left:438.60px;top:533.66px;width:87.20px;height:24.00px;background:#ffffff;"></div>
<div class="b" style="left:534.60px;top:533.66px;width:16.00px;height:24.00px;background:#ffffff;"></div>
<div class="b" style="left:559.40px;top:533.66px;width:156.50px;height:24.00px;background:#ffffff;"></div>
<div class="b" style="left:724.70px;top:533.66px;width:43.40px;height:24.00px;background:#ffffff;"></div>
<div class="b" style="left:776.90px;top:533.66px;width:155.10px;height:24.00px;background:#ffffff;"></div>
<div class="b" style="left:940.80px;top:533.66px;width:77.90px;height:24.00px;background:#ffffff;"></div>
<div class="b" style="left:1027.50px;top:533.66px;width:174.30px;height:24.00px;background:#ffffff;"></div>
<div class="b" style="left:1210.60px;top:533.66px;width:33.50px;height:24.00px;background:#ffffff;"></div>
<div class="b" style="left:1252.90px;top:533.66px;width:234.10px;height:24.00px;background:#ffffff;"></div>
<div class="b" style="left:1495.80px;top:533.66px;width:35.10px;height:24.00px;background:#ffffff;"></div>
<div class="b" style="left:1539.70px;top:533.66px;width:234.40px;height:24.00px;background:#ffffff;"></div>
<div class="b" style="left:1782.90px;top:533.66px;width:33.60px;height:24.00px;background:#ffffff;"></div>
<div class="b" style="left:1825.30px;top:533.66px;width:51.70px;height:24.00px;background:#ffffff;"></div>
<div class="t" style="right:980.00px;top:538.92px;font:normal 14.4px/14.4px 'Liberation Mono', monospace;color:#32363a;">2,000.00.00 </div>
<div class="t" style="left:941.00px;top:538.92px;font:normal 14.4px/14.4px 'Liberation Mono', monospace;color:#32363a;">USD</div>
<div class="b" style="left:10.80px;top:558.33px;width:81.10px;height:24.00px;background:#e8ecf1;"></div>
<div class="b" style="left:100.70px;top:558.33px;width:147.40px;height:24.00px;background:#e8ecf1;"></div>
<div class="b" style="left:256.90px;top:558.33px;width:86.10px;height:24.00px;background:#e8ecf1;"></div>
<div class="b" style="left:351.80px;top:558.33px;width:35.10px;height:24.00px;background:#e8ecf1;"></div>
<div class="b" style="left:395.70px;top:558.33px;width:34.10px;height:24.00px;background:#e8ecf1;"></div>
<div class="b" style="left:438.60px;top:558.33px;width:87.20px;height:24.00px;background:#e8ecf1;"></div>
<div class="b" style="left:534.60px;top:558.33px;width:16.00px;height:24.00px;background:#e8ecf1;"></div>
<div class="b" style="left:559.40px;top:558.33px;width:156.50px;height:24.00px;background:#e8ecf1;"></div>
<div class="b" style="left:724.70px;top:558.33px;width:43.40px;height:24.00px;background:#e8ecf1;"></div>
<div class="b" style="left:776.90px;top:558.33px;width:155.10px;height:24.00px;background:#e8ecf1;"></div>
<div class="b" style="left:940.80px;top:558.33px;width:77.90px;height:24.00px;background:#e8ecf1;"></div>
<div class="b" style="left:1027.50px;top:558.33px;width:174.30px;height:24.00px;background:#e8ecf1;"></div>
<div class="b" style="left:1210.60px;top:558.33px;width:33.50px;height:24.00px;background:#e8ecf1;"></div>
<div class="b" style="left:1252.90px;top:558.33px;width:234.10px;height:24.00px;background:#e8ecf1;"></div>
<div class="b" style="left:1495.80px;top:558.33px;width:35.10px;height:24.00px;background:#e8ecf1;"></div>
<div class="b" style="left:1539.70px;top:558.33px;width:234.40px;height:24.00px;background:#e8ecf1;"></div>
<div class="b" style="left:1782.90px;top:558.33px;width:33.60px;height:24.00px;background:#e8ecf1;"></div>
<div class="b" style="left:1825.30px;top:558.33px;width:51.70px;height:24.00px;background:#e8ecf1;"></div>
<div class="t" style="right:980.00px;top:563.59px;font:normal 14.4px/14.4px 'Liberation Mono', monospace;color:#32363a;">2,000.00.00-</div>
<div class="t" style="left:941.00px;top:563.59px;font:normal 14.4px/14.4px 'Liberation Mono', monospace;color:#32363a;">USD</div>
<div class="b" style="left:10.80px;top:583.00px;width:81.10px;height:24.00px;background:#ffffff;"></div>
<div class="b" style="left:100.70px;top:583.00px;width:147.40px;height:24.00px;background:#ffffff;"></div>
<div class="b" style="left:256.90px;top:583.00px;width:86.10px;height:24.00px;background:#ffffff;"></div>
<div class="b" style="left:351.80px;top:583.00px;width:35.10px;height:24.00px;background:#ffffff;"></div>
<div class="b" style="left:395.70px;top:583.00px;width:34.10px;height:24.00px;background:#ffffff;"></div>
<div class="b" style="left:438.60px;top:583.00px;width:87.20px;height:24.00px;background:#ffffff;"></div>
<div class="b" style="left:534.60px;top:583.00px;width:16.00px;height:24.00px;background:#ffffff;"></div>
<div class="b" style="left:559.40px;top:583.00px;width:156.50px;height:24.00px;background:#ffffff;"></div>
<div class="b" style="left:724.70px;top:583.00px;width:43.40px;height:24.00px;background:#ffffff;"></div>
<div class="b" style="left:776.90px;top:583.00px;width:155.10px;height:24.00px;background:#ffffff;"></div>
<div class="b" style="left:940.80px;top:583.00px;width:77.90px;height:24.00px;background:#ffffff;"></div>
<div class="b" style="left:1027.50px;top:583.00px;width:174.30px;height:24.00px;background:#ffffff;"></div>
<div class="b" style="left:1210.60px;top:583.00px;width:33.50px;height:24.00px;background:#ffffff;"></div>
<div class="b" style="left:1252.90px;top:583.00px;width:234.10px;height:24.00px;background:#ffffff;"></div>
<div class="b" style="left:1495.80px;top:583.00px;width:35.10px;height:24.00px;background:#ffffff;"></div>
<div class="b" style="left:1539.70px;top:583.00px;width:234.40px;height:24.00px;background:#ffffff;"></div>
<div class="b" style="left:1782.90px;top:583.00px;width:33.60px;height:24.00px;background:#ffffff;"></div>
<div class="b" style="left:1825.30px;top:583.00px;width:51.70px;height:24.00px;background:#ffffff;"></div>
<div class="t" style="right:980.00px;top:588.26px;font:normal 14.4px/14.4px 'Liberation Mono', monospace;color:#32363a;">2,000.00.00 </div>
<div class="t" style="left:941.00px;top:588.26px;font:normal 14.4px/14.4px 'Liberation Mono', monospace;color:#32363a;">USD</div>
<div class="b" style="left:10.80px;top:607.67px;width:81.10px;height:24.00px;background:#e8ecf1;"></div>
<div class="b" style="left:100.70px;top:607.67px;width:147.40px;height:24.00px;background:#e8ecf1;"></div>
<div class="b" style="left:256.90px;top:607.67px;width:86.10px;height:24.00px;background:#e8ecf1;"></div>
<div class="b" style="left:351.80px;top:607.67px;width:35.10px;height:24.00px;background:#e8ecf1;"></div>
<div class="b" style="left:395.70px;top:607.67px;width:34.10px;height:24.00px;background:#e8ecf1;"></div>
<div class="b" style="left:438.60px;top:607.67px;width:87.20px;height:24.00px;background:#e8ecf1;"></div>
<div class="b" style="left:534.60px;top:607.67px;width:16.00px;height:24.00px;background:#e8ecf1;"></div>
<div class="b" style="left:559.40px;top:607.67px;width:156.50px;height:24.00px;background:#e8ecf1;"></div>
<div class="b" style="left:724.70px;top:607.67px;width:43.40px;height:24.00px;background:#e8ecf1;"></div>
<div class="b" style="left:776.90px;top:607.67px;width:155.10px;height:24.00px;background:#e8ecf1;"></div>
<div class="b" style="left:940.80px;top:607.67px;width:77.90px;height:24.00px;background:#e8ecf1;"></div>
<div class="b" style="left:1027.50px;top:607.67px;width:174.30px;height:24.00px;background:#e8ecf1;"></div>
<div class="b" style="left:1210.60px;top:607.67px;width:33.50px;height:24.00px;background:#e8ecf1;"></div>
<div class="b" style="left:1252.90px;top:607.67px;width:234.10px;height:24.00px;background:#e8ecf1;"></div>
<div class="b" style="left:1495.80px;top:607.67px;width:35.10px;height:24.00px;background:#e8ecf1;"></div>
<div class="b" style="left:1539.70px;top:607.67px;width:234.40px;height:24.00px;background:#e8ecf1;"></div>
<div class="b" style="left:1782.90px;top:607.67px;width:33.60px;height:24.00px;background:#e8ecf1;"></div>
<div class="b" style="left:1825.30px;top:607.67px;width:51.70px;height:24.00px;background:#e8ecf1;"></div>
<div class="t" style="right:980.00px;top:612.93px;font:normal 14.4px/14.4px 'Liberation Mono', monospace;color:#32363a;">2,000.00.00-</div>
<div class="t" style="left:941.00px;top:612.93px;font:normal 14.4px/14.4px 'Liberation Mono', monospace;color:#32363a;">USD</div>
<div class="b" style="left:10.80px;top:632.34px;width:81.10px;height:24.00px;background:#ffffff;"></div>
<div class="b" style="left:100.70px;top:632.34px;width:147.40px;height:24.00px;background:#ffffff;"></div>
<div class="b" style="left:256.90px;top:632.34px;width:86.10px;height:24.00px;background:#ffffff;"></div>
<div class="b" style="left:351.80px;top:632.34px;width:35.10px;height:24.00px;background:#ffffff;"></div>
<div class="b" style="left:395.70px;top:632.34px;width:34.10px;height:24.00px;background:#ffffff;"></div>
<div class="b" style="left:438.60px;top:632.34px;width:87.20px;height:24.00px;background:#ffffff;"></div>
<div class="b" style="left:534.60px;top:632.34px;width:16.00px;height:24.00px;background:#ffffff;"></div>
<div class="b" style="left:559.40px;top:632.34px;width:156.50px;height:24.00px;background:#ffffff;"></div>
<div class="b" style="left:724.70px;top:632.34px;width:43.40px;height:24.00px;background:#ffffff;"></div>
<div class="b" style="left:776.90px;top:632.34px;width:155.10px;height:24.00px;background:#ffffff;"></div>
<div class="b" style="left:940.80px;top:632.34px;width:77.90px;height:24.00px;background:#ffffff;"></div>
<div class="b" style="left:1027.50px;top:632.34px;width:174.30px;height:24.00px;background:#ffffff;"></div>
<div class="b" style="left:1210.60px;top:632.34px;width:33.50px;height:24.00px;background:#ffffff;"></div>
<div class="b" style="left:1252.90px;top:632.34px;width:234.10px;height:24.00px;background:#ffffff;"></div>
<div class="b" style="left:1495.80px;top:632.34px;width:35.10px;height:24.00px;background:#ffffff;"></div>
<div class="b" style="left:1539.70px;top:632.34px;width:234.40px;height:24.00px;background:#ffffff;"></div>
<div class="b" style="left:1782.90px;top:632.34px;width:33.60px;height:24.00px;background:#ffffff;"></div>
<div class="b" style="left:1825.30px;top:632.34px;width:51.70px;height:24.00px;background:#ffffff;"></div>
<div class="t" style="right:980.00px;top:637.60px;font:normal 14.4px/14.4px 'Liberation Mono', monospace;color:#32363a;">2,000.00.00-</div>
<div class="t" style="left:941.00px;top:637.60px;font:normal 14.4px/14.4px 'Liberation Mono', monospace;color:#32363a;">USD</div>
<div class="b" style="left:10.80px;top:657.01px;width:81.10px;height:24.00px;background:#e8ecf1;"></div>
<div class="b" style="left:100.70px;top:657.01px;width:147.40px;height:24.00px;background:#e8ecf1;"></div>
<div class="b" style="left:256.90px;top:657.01px;width:86.10px;height:24.00px;background:#e8ecf1;"></div>
<div class="b" style="left:351.80px;top:657.01px;width:35.10px;height:24.00px;background:#e8ecf1;"></div>
<div class="b" style="left:395.70px;top:657.01px;width:34.10px;height:24.00px;background:#e8ecf1;"></div>
<div class="b" style="left:438.60px;top:657.01px;width:87.20px;height:24.00px;background:#e8ecf1;"></div>
<div class="b" style="left:534.60px;top:657.01px;width:16.00px;height:24.00px;background:#e8ecf1;"></div>
<div class="b" style="left:559.40px;top:657.01px;width:156.50px;height:24.00px;background:#e8ecf1;"></div>
<div class="b" style="left:724.70px;top:657.01px;width:43.40px;height:24.00px;background:#e8ecf1;"></div>
<div class="b" style="left:776.90px;top:657.01px;width:155.10px;height:24.00px;background:#e8ecf1;"></div>
<div class="b" style="left:940.80px;top:657.01px;width:77.90px;height:24.00px;background:#e8ecf1;"></div>
<div class="b" style="left:1027.50px;top:657.01px;width:174.30px;height:24.00px;background:#e8ecf1;"></div>
<div class="b" style="left:1210.60px;top:657.01px;width:33.50px;height:24.00px;background:#e8ecf1;"></div>
<div class="b" style="left:1252.90px;top:657.01px;width:234.10px;height:24.00px;background:#e8ecf1;"></div>
<div class="b" style="left:1495.80px;top:657.01px;width:35.10px;height:24.00px;background:#e8ecf1;"></div>
<div class="b" style="left:1539.70px;top:657.01px;width:234.40px;height:24.00px;background:#e8ecf1;"></div>
<div class="b" style="left:1782.90px;top:657.01px;width:33.60px;height:24.00px;background:#e8ecf1;"></div>
<div class="b" style="left:1825.30px;top:657.01px;width:51.70px;height:24.00px;background:#e8ecf1;"></div>
<div class="t" style="right:980.00px;top:662.27px;font:normal 14.4px/14.4px 'Liberation Mono', monospace;color:#32363a;">2,000.00.00 </div>
<div class="t" style="left:941.00px;top:662.27px;font:normal 14.4px/14.4px 'Liberation Mono', monospace;color:#32363a;">USD</div>
<div class="b" style="left:10.80px;top:681.68px;width:81.10px;height:24.00px;background:#ffffff;"></div>
<div class="b" style="left:100.70px;top:681.68px;width:147.40px;height:24.00px;background:#ffffff;"></div>
<div class="b" style="left:256.90px;top:681.68px;width:86.10px;height:24.00px;background:#ffffff;"></div>
<div class="b" style="left:351.80px;top:681.68px;width:35.10px;height:24.00px;background:#ffffff;"></div>
<div class="b" style="left:395.70px;top:681.68px;width:34.10px;height:24.00px;background:#ffffff;"></div>
<div class="b" style="left:438.60px;top:681.68px;width:87.20px;height:24.00px;background:#ffffff;"></div>
<div class="b" style="left:534.60px;top:681.68px;width:16.00px;height:24.00px;background:#ffffff;"></div>
<div class="b" style="left:559.40px;top:681.68px;width:156.50px;height:24.00px;background:#ffffff;"></div>
<div class="b" style="left:724.70px;top:681.68px;width:43.40px;height:24.00px;background:#ffffff;"></div>
<div class="b" style="left:776.90px;top:681.68px;width:155.10px;height:24.00px;background:#ffffff;"></div>
<div class="b" style="left:940.80px;top:681.68px;width:77.90px;height:24.00px;background:#ffffff;"></div>
<div class="b" style="left:1027.50px;top:681.68px;width:174.30px;height:24.00px;background:#ffffff;"></div>
<div class="b" style="left:1210.60px;top:681.68px;width:33.50px;height:24.00px;background:#ffffff;"></div>
<div class="b" style="left:1252.90px;top:681.68px;width:234.10px;height:24.00px;background:#ffffff;"></div>
<div class="b" style="left:1495.80px;top:681.68px;width:35.10px;height:24.00px;background:#ffffff;"></div>
<div class="b" style="left:1539.70px;top:681.68px;width:234.40px;height:24.00px;background:#ffffff;"></div>
<div class="b" style="left:1782.90px;top:681.68px;width:33.60px;height:24.00px;background:#ffffff;"></div>
<div class="b" style="left:1825.30px;top:681.68px;width:51.70px;height:24.00px;background:#ffffff;"></div>
<div class="t" style="right:980.00px;top:686.94px;font:normal 14.4px/14.4px 'Liberation Mono', monospace;color:#32363a;">2,000.00.00-</div>
<div class="t" style="left:941.00px;top:686.94px;font:normal 14.4px/14.4px 'Liberation Mono', monospace;color:#32363a;">USD</div>
<div class="b" style="left:10.80px;top:706.35px;width:81.10px;height:24.00px;background:#e8ecf1;"></div>
<div class="b" style="left:100.70px;top:706.35px;width:147.40px;height:24.00px;background:#e8ecf1;"></div>
<div class="b" style="left:256.90px;top:706.35px;width:86.10px;height:24.00px;background:#e8ecf1;"></div>
<div class="b" style="left:351.80px;top:706.35px;width:35.10px;height:24.00px;background:#e8ecf1;"></div>
<div class="b" style="left:395.70px;top:706.35px;width:34.10px;height:24.00px;background:#e8ecf1;"></div>
<div class="b" style="left:438.60px;top:706.35px;width:87.20px;height:24.00px;background:#e8ecf1;"></div>
<div class="b" style="left:534.60px;top:706.35px;width:16.00px;height:24.00px;background:#e8ecf1;"></div>
<div class="b" style="left:559.40px;top:706.35px;width:156.50px;height:24.00px;background:#e8ecf1;"></div>
<div class="b" style="left:724.70px;top:706.35px;width:43.40px;height:24.00px;background:#e8ecf1;"></div>
<div class="b" style="left:776.90px;top:706.35px;width:155.10px;height:24.00px;background:#e8ecf1;"></div>
<div class="b" style="left:940.80px;top:706.35px;width:77.90px;height:24.00px;background:#e8ecf1;"></div>
<div class="b" style="left:1027.50px;top:706.35px;width:174.30px;height:24.00px;background:#e8ecf1;"></div>
<div class="b" style="left:1210.60px;top:706.35px;width:33.50px;height:24.00px;background:#e8ecf1;"></div>
<div class="b" style="left:1252.90px;top:706.35px;width:234.10px;height:24.00px;background:#e8ecf1;"></div>
<div class="b" style="left:1495.80px;top:706.35px;width:35.10px;height:24.00px;background:#e8ecf1;"></div>
<div class="b" style="left:1539.70px;top:706.35px;width:234.40px;height:24.00px;background:#e8ecf1;"></div>
<div class="b" style="left:1782.90px;top:706.35px;width:33.60px;height:24.00px;background:#e8ecf1;"></div>
<div class="b" style="left:1825.30px;top:706.35px;width:51.70px;height:24.00px;background:#e8ecf1;"></div>
<div class="t" style="right:980.00px;top:711.61px;font:normal 14.4px/14.4px 'Liberation Mono', monospace;color:#32363a;">2,000.00.00 </div>
<div class="t" style="left:941.00px;top:711.61px;font:normal 14.4px/14.4px 'Liberation Mono', monospace;color:#32363a;">USD</div>
<div class="b" style="left:10.80px;top:731.02px;width:81.10px;height:24.00px;background:#ffffff;"></div>
<div class="b" style="left:100.70px;top:731.02px;width:147.40px;height:24.00px;background:#ffffff;"></div>
<div class="b" style="left:256.90px;top:731.02px;width:86.10px;height:24.00px;background:#ffffff;"></div>
<div class="b" style="left:351.80px;top:731.02px;width:35.10px;height:24.00px;background:#ffffff;"></div>
<div class="b" style="left:395.70px;top:731.02px;width:34.10px;height:24.00px;background:#ffffff;"></div>
<div class="b" style="left:438.60px;top:731.02px;width:87.20px;height:24.00px;background:#ffffff;"></div>
<div class="b" style="left:534.60px;top:731.02px;width:16.00px;height:24.00px;background:#ffffff;"></div>
<div class="b" style="left:559.40px;top:731.02px;width:156.50px;height:24.00px;background:#ffffff;"></div>
<div class="b" style="left:724.70px;top:731.02px;width:43.40px;height:24.00px;background:#ffffff;"></div>
<div class="b" style="left:776.90px;top:731.02px;width:155.10px;height:24.00px;background:#ffffff;"></div>
<div class="b" style="left:940.80px;top:731.02px;width:77.90px;height:24.00px;background:#ffffff;"></div>
<div class="b" style="left:1027.50px;top:731.02px;width:174.30px;height:24.00px;background:#ffffff;"></div>
<div class="b" style="left:1210.60px;top:731.02px;width:33.50px;height:24.00px;background:#ffffff;"></div>
<div class="b" style="left:1252.90px;top:731.02px;width:234.10px;height:24.00px;background:#ffffff;"></div>
<div class="b" style="left:1495.80px;top:731.02px;width:35.10px;height:24.00px;background:#ffffff;"></div>
<div class="b" style="left:1539.70px;top:731.02px;width:234.40px;height:24.00px;background:#ffffff;"></div>
<div class="b" style="left:1782.90px;top:731.02px;width:33.60px;height:24.00px;background:#ffffff;"></div>
<div class="b" style="left:1825.30px;top:731.02px;width:51.70px;height:24.00px;background:#ffffff;"></div>
<div class="t" style="right:980.00px;top:736.28px;font:normal 14.4px/14.4px 'Liberation Mono', monospace;color:#32363a;">2,000.00.00-</div>
<div class="t" style="left:941.00px;top:736.28px;font:normal 14.4px/14.4px 'Liberation Mono', monospace;color:#32363a;">USD</div>
<div class="b" style="left:10.80px;top:755.69px;width:81.10px;height:24.00px;background:#e8ecf1;"></div>
<div class="b" style="left:100.70px;top:755.69px;width:147.40px;height:24.00px;background:#e8ecf1;"></div>
<div class="b" style="left:256.90px;top:755.69px;width:86.10px;height:24.00px;background:#e8ecf1;"></div>
<div class="b" style="left:351.80px;top:755.69px;width:35.10px;height:24.00px;background:#e8ecf1;"></div>
<div class="b" style="left:395.70px;top:755.69px;width:34.10px;height:24.00px;background:#e8ecf1;"></div>
<div class="b" style="left:438.60px;top:755.69px;width:87.20px;height:24.00px;background:#e8ecf1;"></div>
<div class="b" style="left:534.60px;top:755.69px;width:16.00px;height:24.00px;background:#e8ecf1;"></div>
<div class="b" style="left:559.40px;top:755.69px;width:156.50px;height:24.00px;background:#e8ecf1;"></div>
<div class="b" style="left:724.70px;top:755.69px;width:43.40px;height:24.00px;background:#e8ecf1;"></div>
<div class="b" style="left:776.90px;top:755.69px;width:155.10px;height:24.00px;background:#e8ecf1;"></div>
<div class="b" style="left:940.80px;top:755.69px;width:77.90px;height:24.00px;background:#e8ecf1;"></div>
<div class="b" style="left:1027.50px;top:755.69px;width:174.30px;height:24.00px;background:#e8ecf1;"></div>
<div class="b" style="left:1210.60px;top:755.69px;width:33.50px;height:24.00px;background:#e8ecf1;"></div>
<div class="b" style="left:1252.90px;top:755.69px;width:234.10px;height:24.00px;background:#e8ecf1;"></div>
<div class="b" style="left:1495.80px;top:755.69px;width:35.10px;height:24.00px;background:#e8ecf1;"></div>
<div class="b" style="left:1539.70px;top:755.69px;width:234.40px;height:24.00px;background:#e8ecf1;"></div>
<div class="b" style="left:1782.90px;top:755.69px;width:33.60px;height:24.00px;background:#e8ecf1;"></div>
<div class="b" style="left:1825.30px;top:755.69px;width:51.70px;height:24.00px;background:#e8ecf1;"></div>
<div class="t" style="right:980.00px;top:760.95px;font:normal 14.4px/14.4px 'Liberation Mono', monospace;color:#32363a;">2,000.00.00 </div>
<div class="t" style="left:941.00px;top:760.95px;font:normal 14.4px/14.4px 'Liberation Mono', monospace;color:#32363a;">USD</div>
<div class="b" style="left:10.80px;top:780.36px;width:81.10px;height:24.00px;background:#ffffff;"></div>
<div class="b" style="left:100.70px;top:780.36px;width:147.40px;height:24.00px;background:#ffffff;"></div>
<div class="b" style="left:256.90px;top:780.36px;width:86.10px;height:24.00px;background:#ffffff;"></div>
<div class="b" style="left:351.80px;top:780.36px;width:35.10px;height:24.00px;background:#ffffff;"></div>
<div class="b" style="left:395.70px;top:780.36px;width:34.10px;height:24.00px;background:#ffffff;"></div>
<div class="b" style="left:438.60px;top:780.36px;width:87.20px;height:24.00px;background:#ffffff;"></div>
<div class="b" style="left:534.60px;top:780.36px;width:16.00px;height:24.00px;background:#ffffff;"></div>
<div class="b" style="left:559.40px;top:780.36px;width:156.50px;height:24.00px;background:#ffffff;"></div>
<div class="b" style="left:724.70px;top:780.36px;width:43.40px;height:24.00px;background:#ffffff;"></div>
<div class="b" style="left:776.90px;top:780.36px;width:155.10px;height:24.00px;background:#ffffff;"></div>
<div class="b" style="left:940.80px;top:780.36px;width:77.90px;height:24.00px;background:#ffffff;"></div>
<div class="b" style="left:1027.50px;top:780.36px;width:174.30px;height:24.00px;background:#ffffff;"></div>
<div class="b" style="left:1210.60px;top:780.36px;width:33.50px;height:24.00px;background:#ffffff;"></div>
<div class="b" style="left:1252.90px;top:780.36px;width:234.10px;height:24.00px;background:#ffffff;"></div>
<div class="b" style="left:1495.80px;top:780.36px;width:35.10px;height:24.00px;background:#ffffff;"></div>
<div class="b" style="left:1539.70px;top:780.36px;width:234.40px;height:24.00px;background:#ffffff;"></div>
<div class="b" style="left:1782.90px;top:780.36px;width:33.60px;height:24.00px;background:#ffffff;"></div>
<div class="b" style="left:1825.30px;top:780.36px;width:51.70px;height:24.00px;background:#ffffff;"></div>
<div class="t" style="right:980.00px;top:785.62px;font:normal 14.4px/14.4px 'Liberation Mono', monospace;color:#32363a;">2,000.00.00-</div>
<div class="t" style="left:941.00px;top:785.62px;font:normal 14.4px/14.4px 'Liberation Mono', monospace;color:#32363a;">USD</div>
<div class="b" style="left:10.80px;top:805.03px;width:81.10px;height:24.00px;background:#e8ecf1;"></div>
<div class="b" style="left:100.70px;top:805.03px;width:147.40px;height:24.00px;background:#e8ecf1;"></div>
<div class="b" style="left:256.90px;top:805.03px;width:86.10px;height:24.00px;background:#e8ecf1;"></div>
<div class="b" style="left:351.80px;top:805.03px;width:35.10px;height:24.00px;background:#e8ecf1;"></div>
<div class="b" style="left:395.70px;top:805.03px;width:34.10px;height:24.00px;background:#e8ecf1;"></div>
<div class="b" style="left:438.60px;top:805.03px;width:87.20px;height:24.00px;background:#e8ecf1;"></div>
<div class="b" style="left:534.60px;top:805.03px;width:16.00px;height:24.00px;background:#e8ecf1;"></div>
<div class="b" style="left:559.40px;top:805.03px;width:156.50px;height:24.00px;background:#e8ecf1;"></div>
<div class="b" style="left:724.70px;top:805.03px;width:43.40px;height:24.00px;background:#e8ecf1;"></div>
<div class="b" style="left:776.90px;top:805.03px;width:155.10px;height:24.00px;background:#e8ecf1;"></div>
<div class="b" style="left:940.80px;top:805.03px;width:77.90px;height:24.00px;background:#e8ecf1;"></div>
<div class="b" style="left:1027.50px;top:805.03px;width:174.30px;height:24.00px;background:#e8ecf1;"></div>
<div class="b" style="left:1210.60px;top:805.03px;width:33.50px;height:24.00px;background:#e8ecf1;"></div>
<div class="b" style="left:1252.90px;top:805.03px;width:234.10px;height:24.00px;background:#e8ecf1;"></div>
<div class="b" style="left:1495.80px;top:805.03px;width:35.10px;height:24.00px;background:#e8ecf1;"></div>
<div class="b" style="left:1539.70px;top:805.03px;width:234.40px;height:24.00px;background:#e8ecf1;"></div>
<div class="b" style="left:1782.90px;top:805.03px;width:33.60px;height:24.00px;background:#e8ecf1;"></div>
<div class="b" style="left:1825.30px;top:805.03px;width:51.70px;height:24.00px;background:#e8ecf1;"></div>
<div class="t" style="right:980.00px;top:810.29px;font:normal 14.4px/14.4px 'Liberation Mono', monospace;color:#32363a;">2,000.00.00 </div>
<div class="t" style="left:941.00px;top:810.29px;font:normal 14.4px/14.4px 'Liberation Mono', monospace;color:#32363a;">USD</div>
<div class="b" style="left:10.80px;top:829.70px;width:81.10px;height:24.00px;background:#ffffff;"></div>
<div class="b" style="left:100.70px;top:829.70px;width:147.40px;height:24.00px;background:#ffffff;"></div>
<div class="b" style="left:256.90px;top:829.70px;width:86.10px;height:24.00px;background:#ffffff;"></div>
<div class="b" style="left:351.80px;top:829.70px;width:35.10px;height:24.00px;background:#ffffff;"></div>
<div class="b" style="left:395.70px;top:829.70px;width:34.10px;height:24.00px;background:#ffffff;"></div>
<div class="b" style="left:438.60px;top:829.70px;width:87.20px;height:24.00px;background:#ffffff;"></div>
<div class="b" style="left:534.60px;top:829.70px;width:16.00px;height:24.00px;background:#ffffff;"></div>
<div class="b" style="left:559.40px;top:829.70px;width:156.50px;height:24.00px;background:#ffffff;"></div>
<div class="b" style="left:724.70px;top:829.70px;width:43.40px;height:24.00px;background:#ffffff;"></div>
<div class="b" style="left:776.90px;top:829.70px;width:155.10px;height:24.00px;background:#ffffff;"></div>
<div class="b" style="left:940.80px;top:829.70px;width:77.90px;height:24.00px;background:#ffffff;"></div>
<div class="b" style="left:1027.50px;top:829.70px;width:174.30px;height:24.00px;background:#ffffff;"></div>
<div class="b" style="left:1210.60px;top:829.70px;width:33.50px;height:24.00px;background:#ffffff;"></div>
<div class="b" style="left:1252.90px;top:829.70px;width:234.10px;height:24.00px;background:#ffffff;"></div>
<div class="b" style="left:1495.80px;top:829.70px;width:35.10px;height:24.00px;background:#ffffff;"></div>
<div class="b" style="left:1539.70px;top:829.70px;width:234.40px;height:24.00px;background:#ffffff;"></div>
<div class="b" style="left:1782.90px;top:829.70px;width:33.60px;height:24.00px;background:#ffffff;"></div>
<div class="b" style="left:1825.30px;top:829.70px;width:51.70px;height:24.00px;background:#ffffff;"></div>
<div class="t" style="right:980.00px;top:834.96px;font:normal 14.4px/14.4px 'Liberation Mono', monospace;color:#32363a;">2,000.00.00-</div>
<div class="t" style="left:941.00px;top:834.96px;font:normal 14.4px/14.4px 'Liberation Mono', monospace;color:#32363a;">USD</div>
<div class="b" style="left:10.80px;top:854.37px;width:81.10px;height:24.00px;background:#e8ecf1;"></div>
<div class="b" style="left:100.70px;top:854.37px;width:147.40px;height:24.00px;background:#e8ecf1;"></div>
<div class="b" style="left:256.90px;top:854.37px;width:86.10px;height:24.00px;background:#e8ecf1;"></div>
<div class="b" style="left:351.80px;top:854.37px;width:35.10px;height:24.00px;background:#e8ecf1;"></div>
<div class="b" style="left:395.70px;top:854.37px;width:34.10px;height:24.00px;background:#e8ecf1;"></div>
<div class="b" style="left:438.60px;top:854.37px;width:87.20px;height:24.00px;background:#e8ecf1;"></div>
<div class="b" style="left:534.60px;top:854.37px;width:16.00px;height:24.00px;background:#e8ecf1;"></div>
<div class="b" style="left:559.40px;top:854.37px;width:156.50px;height:24.00px;background:#e8ecf1;"></div>
<div class="b" style="left:724.70px;top:854.37px;width:43.40px;height:24.00px;background:#e8ecf1;"></div>
<div class="b" style="left:776.90px;top:854.37px;width:155.10px;height:24.00px;background:#e8ecf1;"></div>
<div class="b" style="left:940.80px;top:854.37px;width:77.90px;height:24.00px;background:#e8ecf1;"></div>
<div class="b" style="left:1027.50px;top:854.37px;width:174.30px;height:24.00px;background:#e8ecf1;"></div>
<div class="b" style="left:1210.60px;top:854.37px;width:33.50px;height:24.00px;background:#e8ecf1;"></div>
<div class="b" style="left:1252.90px;top:854.37px;width:234.10px;height:24.00px;background:#e8ecf1;"></div>
<div class="b" style="left:1495.80px;top:854.37px;width:35.10px;height:24.00px;background:#e8ecf1;"></div>
<div class="b" style="left:1539.70px;top:854.37px;width:234.40px;height:24.00px;background:#e8ecf1;"></div>
<div class="b" style="left:1782.90px;top:854.37px;width:33.60px;height:24.00px;background:#e8ecf1;"></div>
<div class="b" style="left:1825.30px;top:854.37px;width:51.70px;height:24.00px;background:#e8ecf1;"></div>
<div class="t" style="right:980.00px;top:859.63px;font:normal 14.4px/14.4px 'Liberation Mono', monospace;color:#32363a;">2,000.00.00-</div>
<div class="t" style="left:941.00px;top:859.63px;font:normal 14.4px/14.4px 'Liberation Mono', monospace;color:#32363a;">USD</div>
<div class="b" style="left:10.80px;top:879.04px;width:81.10px;height:24.00px;background:#ffffff;"></div>
<div class="b" style="left:100.70px;top:879.04px;width:147.40px;height:24.00px;background:#ffffff;"></div>
<div class="b" style="left:256.90px;top:879.04px;width:86.10px;height:24.00px;background:#ffffff;"></div>
<div class="b" style="left:351.80px;top:879.04px;width:35.10px;height:24.00px;background:#ffffff;"></div>
<div class="b" style="left:395.70px;top:879.04px;width:34.10px;height:24.00px;background:#ffffff;"></div>
<div class="b" style="left:438.60px;top:879.04px;width:87.20px;height:24.00px;background:#ffffff;"></div>
<div class="b" style="left:534.60px;top:879.04px;width:16.00px;height:24.00px;background:#ffffff;"></div>
<div class="b" style="left:559.40px;top:879.04px;width:156.50px;height:24.00px;background:#ffffff;"></div>
<div class="b" style="left:724.70px;top:879.04px;width:43.40px;height:24.00px;background:#ffffff;"></div>
<div class="b" style="left:776.90px;top:879.04px;width:155.10px;height:24.00px;background:#ffffff;"></div>
<div class="b" style="left:940.80px;top:879.04px;width:77.90px;height:24.00px;background:#ffffff;"></div>
<div class="b" style="left:1027.50px;top:879.04px;width:174.30px;height:24.00px;background:#ffffff;"></div>
<div class="b" style="left:1210.60px;top:879.04px;width:33.50px;height:24.00px;background:#ffffff;"></div>
<div class="b" style="left:1252.90px;top:879.04px;width:234.10px;height:24.00px;background:#ffffff;"></div>
<div class="b" style="left:1495.80px;top:879.04px;width:35.10px;height:24.00px;background:#ffffff;"></div>
<div class="b" style="left:1539.70px;top:879.04px;width:234.40px;height:24.00px;background:#ffffff;"></div>
<div class="b" style="left:1782.90px;top:879.04px;width:33.60px;height:24.00px;background:#ffffff;"></div>
<div class="b" style="left:1825.30px;top:879.04px;width:51.70px;height:24.00px;background:#ffffff;"></div>
<div class="t" style="right:980.00px;top:884.30px;font:normal 14.4px/14.4px 'Liberation Mono', monospace;color:#32363a;">2,000.00.00 </div>
<div class="t" style="left:941.00px;top:884.30px;font:normal 14.4px/14.4px 'Liberation Mono', monospace;color:#32363a;">USD</div>
<div class="b" style="left:10.80px;top:903.71px;width:81.10px;height:24.00px;background:#e8ecf1;"></div>
<div class="b" style="left:100.70px;top:903.71px;width:147.40px;height:24.00px;background:#e8ecf1;"></div>
<div class="b" style="left:256.90px;top:903.71px;width:86.10px;height:24.00px;background:#e8ecf1;"></div>
<div class="b" style="left:351.80px;top:903.71px;width:35.10px;height:24.00px;background:#e8ecf1;"></div>
<div class="b" style="left:395.70px;top:903.71px;width:34.10px;height:24.00px;background:#e8ecf1;"></div>
<div class="b" style="left:438.60px;top:903.71px;width:87.20px;height:24.00px;background:#e8ecf1;"></div>
<div class="b" style="left:534.60px;top:903.71px;width:16.00px;height:24.00px;background:#e8ecf1;"></div>
<div class="b" style="left:559.40px;top:903.71px;width:156.50px;height:24.00px;background:#e8ecf1;"></div>
<div class="b" style="left:724.70px;top:903.71px;width:43.40px;height:24.00px;background:#e8ecf1;"></div>
<div class="b" style="left:776.90px;top:903.71px;width:155.10px;height:24.00px;background:#e8ecf1;"></div>
<div class="b" style="left:940.80px;top:903.71px;width:77.90px;height:24.00px;background:#e8ecf1;"></div>
<div class="b" style="left:1027.50px;top:903.71px;width:174.30px;height:24.00px;background:#e8ecf1;"></div>
<div class="b" style="left:1210.60px;top:903.71px;width:33.50px;height:24.00px;background:#e8ecf1;"></div>
<div class="b" style="left:1252.90px;top:903.71px;width:234.10px;height:24.00px;background:#e8ecf1;"></div>
<div class="b" style="left:1495.80px;top:903.71px;width:35.10px;height:24.00px;background:#e8ecf1;"></div>
<div class="b" style="left:1539.70px;top:903.71px;width:234.40px;height:24.00px;background:#e8ecf1;"></div>
<div class="b" style="left:1782.90px;top:903.71px;width:33.60px;height:24.00px;background:#e8ecf1;"></div>
<div class="b" style="left:1825.30px;top:903.71px;width:51.70px;height:24.00px;background:#e8ecf1;"></div>
<div class="t" style="right:980.00px;top:908.97px;font:normal 14.4px/14.4px 'Liberation Mono', monospace;color:#32363a;">2,000.00.00 </div>
<div class="t" style="left:941.00px;top:908.97px;font:normal 14.4px/14.4px 'Liberation Mono', monospace;color:#32363a;">USD</div>
<div class="b" style="left:10.80px;top:928.38px;width:81.10px;height:24.00px;background:#ffffff;"></div>
<div class="b" style="left:100.70px;top:928.38px;width:147.40px;height:24.00px;background:#ffffff;"></div>
<div class="b" style="left:256.90px;top:928.38px;width:86.10px;height:24.00px;background:#ffffff;"></div>
<div class="b" style="left:351.80px;top:928.38px;width:35.10px;height:24.00px;background:#ffffff;"></div>
<div class="b" style="left:395.70px;top:928.38px;width:34.10px;height:24.00px;background:#ffffff;"></div>
<div class="b" style="left:438.60px;top:928.38px;width:87.20px;height:24.00px;background:#ffffff;"></div>
<div class="b" style="left:534.60px;top:928.38px;width:16.00px;height:24.00px;background:#ffffff;"></div>
<div class="b" style="left:559.40px;top:928.38px;width:156.50px;height:24.00px;background:#ffffff;"></div>
<div class="b" style="left:724.70px;top:928.38px;width:43.40px;height:24.00px;background:#ffffff;"></div>
<div class="b" style="left:776.90px;top:928.38px;width:155.10px;height:24.00px;background:#ffffff;"></div>
<div class="b" style="left:940.80px;top:928.38px;width:77.90px;height:24.00px;background:#ffffff;"></div>
<div class="b" style="left:1027.50px;top:928.38px;width:174.30px;height:24.00px;background:#ffffff;"></div>
<div class="b" style="left:1210.60px;top:928.38px;width:33.50px;height:24.00px;background:#ffffff;"></div>
<div class="b" style="left:1252.90px;top:928.38px;width:234.10px;height:24.00px;background:#ffffff;"></div>
<div class="b" style="left:1495.80px;top:928.38px;width:35.10px;height:24.00px;background:#ffffff;"></div>
<div class="b" style="left:1539.70px;top:928.38px;width:234.40px;height:24.00px;background:#ffffff;"></div>
<div class="b" style="left:1782.90px;top:928.38px;width:33.60px;height:24.00px;background:#ffffff;"></div>
<div class="b" style="left:1825.30px;top:928.38px;width:51.70px;height:24.00px;background:#ffffff;"></div>
<div class="t" style="right:988.50px;top:933.64px;font:normal 14.4px/14.4px 'Liberation Mono', monospace;color:#32363a;">2,000.00</div>
<div class="t" style="right:1205.40px;top:933.64px;font:normal 14.4px/14.4px 'Liberation Mono', monospace;color:#32363a;">2,000.00</div>
<div class="t" style="left:100.40px;top:933.64px;font:normal 14.4px/14.4px 'Liberation Mono', monospace;color:#32363a;">20170808</div>
<div class="t" style="left:256.40px;top:933.64px;font:normal 14.4px/14.4px 'Liberation Mono', monospace;color:#32363a;">100000008</div>
<div class="t" style="left:395.00px;top:933.64px;font:normal 14.4px/14.4px 'Liberation Mono', monospace;color:#32363a;">AB</div>
<div class="t" style="left:438.40px;top:933.64px;font:normal 14.4px/14.4px 'Liberation Mono', monospace;color:#32363a;">12/31/2016</div>
<div class="t" style="left:533.80px;top:933.64px;font:normal 14.4px/14.4px 'Liberation Mono', monospace;color:#32363a;">40</div>
<div class="t" style="left:724.50px;top:933.64px;font:normal 14.4px/14.4px 'Liberation Mono', monospace;color:#32363a;">USD</div>
<div class="t" style="left:941.00px;top:933.64px;font:normal 14.4px/14.4px 'Liberation Mono', monospace;color:#32363a;">USD</div>
<div class="b" style="left:12.00px;top:935.00px;width:13.00px;height:13.00px;background:#ffffff;box-sizing:border-box;border:1px solid #9a9a9a;border-radius:2px;"></div>
<svg class="b" style="left:57.00px;top:933.00px;" width="14" height="14" viewBox="0 0 14 14"><path d="M1.5 7.5 L5 11.5 L12.5 2" fill="none" stroke="#107e3e" stroke-width="2.2"/></svg>
<div class="b" style="left:1895.00px;top:127.00px;width:12.00px;height:841.00px;background:#ffffff;"></div>
<svg class="b" style="left:1896.00px;top:128.00px;" width="11" height="20" viewBox="0 0 11 20"><path d="M2 6.5 L5.5 3 L9 6.5 M2 14 L5.5 17.5 L9 14" fill="none" stroke="#0b5aa8" stroke-width="1.4"/></svg>
<div class="b" style="left:1895.00px;top:150.60px;width:11.70px;height:23.60px;background:#959595;"></div>
<svg class="b" style="left:1896.00px;top:946.00px;" width="11" height="20" viewBox="0 0 11 20"><path d="M2 6.5 L5.5 3 L9 6.5 M2 14 L5.5 17.5 L9 14" fill="none" stroke="#0b5aa8" stroke-width="1.4"/></svg>
<div class="b" style="left:0.00px;top:969.40px;width:1894.00px;height:11.30px;background:#ffffff;"></div>
<div class="b" style="left:25.30px;top:969.40px;width:834.70px;height:11.30px;background:#959595;"></div>
<svg class="b" style="left:2.00px;top:969.00px;" width="20" height="12" viewBox="0 0 20 12"><path d="M6.5 2.5 L3.5 6 L6.5 9.5 M14.5 2.5 L17.5 6 L14.5 9.5" fill="none" stroke="#0b5aa8" stroke-width="1.4"/></svg>
<svg class="b" style="left:1873.00px;top:969.00px;" width="20" height="12" viewBox="0 0 20 12"><path d="M6.5 2.5 L3.5 6 L6.5 9.5 M14.5 2.5 L17.5 6 L14.5 9.5" fill="none" stroke="#0b5aa8" stroke-width="1.4"/></svg>
<div class="b" style="left:1.00px;top:986.20px;width:1905.00px;height:39.80px;background:#ffffff;box-sizing:border-box;border:2px solid #c8c8c8;border-radius:3px;"></div>
<div class="b" style="left:4.00px;top:142.00px;width:889.00px;height:786.00px;background:#ffffff;box-sizing:border-box;border:1px solid #9fb4cb;"></div>
<div class="b" style="left:5.00px;top:182.00px;width:887.00px;height:1.00px;background:#a9bbd0;"></div>
<div class="t" style="left:-52.50px;width:1000px;text-align:center;top:156.26px;font:normal 16px/16px 'Liberation Sans', sans-serif;color:#32363a;">Change Layout</div>
<svg class="b" style="left:16.00px;top:155.00px;" width="20" height="18" viewBox="0 0 20 18"><path d="M2.8 4.9 H17.2 M2.8 9.3 H17.2 M2.8 13.8 H17.2" stroke="#4f88c8" stroke-width="1.7" stroke-linecap="round"/></svg>
<svg class="b" style="left:862.40px;top:155.30px;" width="18" height="18" viewBox="-9.0 -9.0 18 18"><g fill="none" stroke="#6a9ac9" stroke-width="1.5" stroke-linecap="butt" stroke-linejoin="miter"><path d="M-5.2 -5.2 L5.2 5.2 M5.2 -5.2 L-5.2 5.2"/></g></svg>
<div class="b" style="left:36.00px;top:247.00px;width:439.00px;height:1.00px;background:#e1e1e1;"></div>
<div class="t" style="left:37.00px;top:225.66px;font:normal 16px/16px 'Liberation Sans', sans-serif;color:#0854a0;">Line 1</div>
<div class="b" style="left:36.80px;top:245.00px;width:44.60px;height:3.00px;background:#0854a0;"></div>
<div class="t" style="left:114.00px;top:225.66px;font:normal 16px/16px 'Liberation Sans', sans-serif;color:#32363a;">Line 2</div>
<div class="t" style="left:191.00px;top:225.66px;font:normal 16px/16px 'Liberation Sans', sans-serif;color:#32363a;">Line 3</div>
<div class="t" style="left:47.30px;top:288.46px;font:normal 16px/16px 'Liberation Sans', sans-serif;color:#32363a;">Line 1</div>
<div class="t" style="left:526.00px;top:287.36px;font:normal 16px/16px 'Liberation Sans', sans-serif;color:#32363a;">Hidden fields</div>
<div class="b" style="left:46.20px;top:312.20px;width:417.60px;height:425.86px;background:#f2f2f2;box-sizing:border-box;border:1px solid #e3e3e3;"></div>
<div class="b" style="left:47.20px;top:343.00px;width:415.60px;height:1.20px;background:#dcdcdc;"></div>
<div class="b" style="left:46.20px;top:344.20px;width:26.10px;height:23.96px;background:#ffffff;"></div>
<div class="b" style="left:72.30px;top:344.20px;width:216.30px;height:23.96px;background:#ebebeb;"></div>
<div class="b" style="left:288.60px;top:344.20px;width:45.70px;height:23.96px;background:#ffffff;"></div>
<div class="b" style="left:334.30px;top:344.20px;width:55.80px;height:23.96px;background:#ffffff;"></div>
<div class="b" style="left:390.10px;top:344.20px;width:36.30px;height:23.96px;background:#f2f2f2;"></div>
<div class="b" style="left:46.20px;top:368.86px;width:26.10px;height:23.96px;background:#ffffff;"></div>
<div class="b" style="left:72.30px;top:368.86px;width:216.30px;height:23.96px;background:#ebebeb;"></div>
<div class="b" style="left:288.60px;top:368.86px;width:45.70px;height:23.96px;background:#ffffff;"></div>
<div class="b" style="left:334.30px;top:368.86px;width:55.80px;height:23.96px;background:#ffffff;"></div>
<div class="b" style="left:390.10px;top:368.86px;width:36.30px;height:23.96px;background:#f2f2f2;"></div>
<div class="b" style="left:46.20px;top:393.52px;width:26.10px;height:23.96px;background:#ffffff;"></div>
<div class="b" style="left:72.30px;top:393.52px;width:216.30px;height:23.96px;background:#ebebeb;"></div>
<div class="b" style="left:288.60px;top:393.52px;width:45.70px;height:23.96px;background:#ffffff;"></div>
<div class="b" style="left:334.30px;top:393.52px;width:55.80px;height:23.96px;background:#ffffff;"></div>
<div class="b" style="left:390.10px;top:393.52px;width:36.30px;height:23.96px;background:#f2f2f2;"></div>
<div class="b" style="left:46.20px;top:418.18px;width:26.10px;height:23.96px;background:#ffffff;"></div>
<div class="b" style="left:72.30px;top:418.18px;width:216.30px;height:23.96px;background:#ebebeb;"></div>
<div class="b" style="left:288.60px;top:418.18px;width:45.70px;height:23.96px;background:#ffffff;"></div>
<div class="b" style="left:334.30px;top:418.18px;width:55.80px;height:23.96px;background:#ffffff;"></div>
<div class="b" style="left:390.10px;top:418.18px;width:36.30px;height:23.96px;background:#f2f2f2;"></div>
<div class="b" style="left:46.20px;top:442.84px;width:26.10px;height:23.96px;background:#ffffff;"></div>
<div class="b" style="left:72.30px;top:442.84px;width:216.30px;height:23.96px;background:#ebebeb;"></div>
<div class="b" style="left:288.60px;top:442.84px;width:45.70px;height:23.96px;background:#ffffff;"></div>
<div class="b" style="left:334.30px;top:442.84px;width:55.80px;height:23.96px;background:#ffffff;"></div>
<div class="b" style="left:390.10px;top:442.84px;width:36.30px;height:23.96px;background:#f2f2f2;"></div>
<div class="b" style="left:46.20px;top:467.50px;width:26.10px;height:23.96px;background:#ffffff;"></div>
<div class="b" style="left:72.30px;top:467.50px;width:216.30px;height:23.96px;background:#ebebeb;"></div>
<div class="b" style="left:288.60px;top:467.50px;width:45.70px;height:23.96px;background:#ffffff;"></div>
<div class="b" style="left:334.30px;top:467.50px;width:55.80px;height:23.96px;background:#ffffff;"></div>
<div class="b" style="left:390.10px;top:467.50px;width:36.30px;height:23.96px;background:#f2f2f2;"></div>
<div class="b" style="left:46.20px;top:492.16px;width:26.10px;height:23.96px;background:#ffffff;"></div>
<div class="b" style="left:72.30px;top:492.16px;width:216.30px;height:23.96px;background:#ebebeb;"></div>
<div class="b" style="left:288.60px;top:492.16px;width:45.70px;height:23.96px;background:#ffffff;"></div>
<div class="b" style="left:334.30px;top:492.16px;width:55.80px;height:23.96px;background:#ffffff;"></div>
<div class="b" style="left:390.10px;top:492.16px;width:36.30px;height:23.96px;background:#f2f2f2;"></div>
<div class="b" style="left:47.20px;top:367.86px;width:379.20px;height:1.00px;background:#e6e6e6;"></div>
<div class="b" style="left:47.20px;top:392.52px;width:379.20px;height:1.00px;background:#e6e6e6;"></div>
<div class="b" style="left:47.20px;top:417.18px;width:379.20px;height:1.00px;background:#e6e6e6;"></div>
<div class="b" style="left:47.20px;top:441.84px;width:379.20px;height:1.00px;background:#e6e6e6;"></div>
<div class="b" style="left:47.20px;top:466.50px;width:379.20px;height:1.00px;background:#e6e6e6;"></div>
<div class="b" style="left:47.20px;top:491.16px;width:379.20px;height:1.00px;background:#e6e6e6;"></div>
<div class="b" style="left:47.20px;top:515.82px;width:379.20px;height:1.00px;background:#e6e6e6;"></div>
<div class="b" style="left:47.20px;top:540.48px;width:379.20px;height:1.00px;background:#e6e6e6;"></div>
<div class="b" style="left:47.20px;top:565.14px;width:379.20px;height:1.00px;background:#e6e6e6;"></div>
<div class="b" style="left:47.20px;top:589.80px;width:379.20px;height:1.00px;background:#e6e6e6;"></div>
<div class="b" style="left:47.20px;top:614.46px;width:379.20px;height:1.00px;background:#e6e6e6;"></div>
<div class="b" style="left:47.20px;top:639.12px;width:379.20px;height:1.00px;background:#e6e6e6;"></div>
<div class="b" style="left:47.20px;top:663.78px;width:379.20px;height:1.00px;background:#e6e6e6;"></div>
<div class="b" style="left:47.20px;top:688.44px;width:379.20px;height:1.00px;background:#e6e6e6;"></div>
<div class="b" style="left:47.20px;top:713.10px;width:379.20px;height:1.00px;background:#e6e6e6;"></div>
<div class="b" style="left:72.00px;top:313.20px;width:1.00px;height:423.86px;background:#e3e3e3;"></div>
<div class="b" style="left:288.30px;top:313.20px;width:1.00px;height:423.86px;background:#e3e3e3;"></div>
<div class="b" style="left:334.00px;top:313.20px;width:1.00px;height:423.86px;background:#e3e3e3;"></div>
<div class="b" style="left:389.80px;top:313.20px;width:1.00px;height:423.86px;background:#e3e3e3;"></div>
<div class="b" style="left:426.40px;top:313.20px;width:1.00px;height:423.86px;background:#7f7f7f;"></div>
<div class="b" style="left:451.60px;top:344.20px;width:11.20px;height:392.86px;background:#ffffff;"></div>
<div class="b" style="left:451.60px;top:414.00px;width:11.20px;height:204.00px;background:#959595;"></div>
<svg class="b" style="left:452.20px;top:346.50px;" width="11" height="20" viewBox="0 0 11 20"><path d="M2.3 5.2 L5.5 2 L8.7 5.2 M2.3 13.6 L5.5 16.8 L8.7 13.6" fill="none" stroke="#2a72c2" stroke-width="1.3"/></svg>
<svg class="b" style="left:452.20px;top:714.06px;" width="11" height="20" viewBox="0 0 11 20"><path d="M2.3 5.6 L5.5 2.4 L8.7 5.6 M2.3 14 L5.5 17.2 L8.7 14" fill="none" stroke="#2a72c2" stroke-width="1.3"/></svg>
<div class="t" style="left:78.80px;top:321.89px;font:normal 13.6px/13.6px 'Liberation Sans', sans-serif;color:#32363a;">Column content</div>
<div class="t" style="left:291.00px;top:321.89px;font:normal 13.6px/13.6px 'Liberation Sans', sans-serif;color:#32363a;">Pos.</div>
<div class="t" style="left:337.00px;top:321.89px;font:normal 13.6px/13.6px 'Liberation Sans', sans-serif;color:#32363a;">Length</div>
<div class="t" style="left:396.00px;top:321.89px;font:normal 13.6px/13.6px 'Liberation Sans', sans-serif;color:#0b5aa8;">Σ</div>
<div class="b" style="left:52.00px;top:350.20px;width:13.00px;height:13.00px;background:#ffffff;box-sizing:border-box;border:1px solid #a8a8a8;border-radius:1.5px;"></div>
<div class="t" style="left:73.20px;top:350.02px;font:normal 13.8px/13.8px 'Liberation Sans', sans-serif;color:#32363a;">Document Number</div>
<div class="t" style="left:289.50px;top:350.17px;font:normal 14px/14px 'Liberation Mono', monospace;color:#32363a;">4</div>
<div class="t" style="left:335.00px;top:350.17px;font:normal 14px/14px 'Liberation Mono', monospace;color:#32363a;"></div>
<div class="b" style="left:52.00px;top:374.86px;width:13.00px;height:13.00px;background:#ffffff;box-sizing:border-box;border:1px solid #a8a8a8;border-radius:1.5px;"></div>
<div class="t" style="left:73.20px;top:374.68px;font:normal 13.8px/13.8px 'Liberation Sans', sans-serif;color:#32363a;">Document Type</div>
<div class="t" style="left:289.50px;top:374.83px;font:normal 14px/14px 'Liberation Mono', monospace;color:#32363a;">5</div>
<div class="t" style="left:335.00px;top:374.83px;font:normal 14px/14px 'Liberation Mono', monospace;color:#32363a;">4</div>
<div class="b" style="left:52.00px;top:399.52px;width:13.00px;height:13.00px;background:#ffffff;box-sizing:border-box;border:1px solid #a8a8a8;border-radius:1.5px;"></div>
<div class="t" style="left:73.20px;top:399.34px;font:normal 13.8px/13.8px 'Liberation Sans', sans-serif;color:#32363a;">Document Date</div>
<div class="t" style="left:289.50px;top:399.49px;font:normal 14px/14px 'Liberation Mono', monospace;color:#32363a;">6</div>
<div class="t" style="left:335.00px;top:399.49px;font:normal 14px/14px 'Liberation Mono', monospace;color:#32363a;">10</div>
<div class="b" style="left:52.00px;top:424.18px;width:13.00px;height:13.00px;background:#ffffff;box-sizing:border-box;border:1px solid #a8a8a8;border-radius:1.5px;"></div>
<div class="t" style="left:73.20px;top:424.00px;font:normal 13.8px/13.8px 'Liberation Sans', sans-serif;color:#32363a;">Posting Date</div>
<div class="t" style="left:289.50px;top:424.15px;font:normal 14px/14px 'Liberation Mono', monospace;color:#32363a;">7</div>
<div class="t" style="left:335.00px;top:424.15px;font:normal 14px/14px 'Liberation Mono', monospace;color:#32363a;">10</div>
<div class="b" style="left:52.00px;top:448.84px;width:13.00px;height:13.00px;background:#ffffff;box-sizing:border-box;border:1px solid #a8a8a8;border-radius:1.5px;"></div>
<div class="t" style="left:73.20px;top:448.66px;font:normal 13.8px/13.8px 'Liberation Sans', sans-serif;color:#32363a;">Posting Key</div>
<div class="t" style="left:289.50px;top:448.81px;font:normal 14px/14px 'Liberation Mono', monospace;color:#32363a;">8</div>
<div class="t" style="left:335.00px;top:448.81px;font:normal 14px/14px 'Liberation Mono', monospace;color:#32363a;">2</div>
<div class="b" style="left:52.00px;top:473.50px;width:13.00px;height:13.00px;background:#ffffff;box-sizing:border-box;border:1px solid #a8a8a8;border-radius:1.5px;"></div>
<div class="t" style="left:73.20px;top:473.32px;font:normal 13.8px/13.8px 'Liberation Sans', sans-serif;color:#32363a;">Local Currency</div>
<div class="t" style="left:289.50px;top:473.47px;font:normal 14px/14px 'Liberation Mono', monospace;color:#32363a;">9</div>
<div class="t" style="left:335.00px;top:473.47px;font:normal 14px/14px 'Liberation Mono', monospace;color:#32363a;">5</div>
<div class="b" style="left:52.00px;top:498.16px;width:13.00px;height:13.00px;background:#ffffff;box-sizing:border-box;border:1px solid #a8a8a8;border-radius:1.5px;"></div>
<div class="t" style="left:73.20px;top:497.98px;font:normal 13.8px/13.8px 'Liberation Sans', sans-serif;color:#32363a;">General Ledger Currency</div>
<div class="t" style="left:289.50px;top:498.13px;font:normal 14px/14px 'Liberation Mono', monospace;color:#32363a;">10</div>
<div class="t" style="left:335.00px;top:498.13px;font:normal 14px/14px 'Liberation Mono', monospace;color:#32363a;">5</div>
<div class="b" style="left:334.80px;top:348.70px;width:18.10px;height:15.10px;background:#0a52a1;"></div>
<div class="t" style="left:335.20px;top:350.87px;font:normal 14px/14px 'Liberation Mono', monospace;color:#ffffff;">10</div>
<div class="b" style="left:525.40px;top:310.60px;width:329.20px;height:427.76px;background:#f2f2f2;box-sizing:border-box;border:1px solid #e3e3e3;"></div>
<div class="b" style="left:526.40px;top:342.10px;width:327.20px;height:1.20px;background:#dcdcdc;"></div>
<div class="b" style="left:525.40px;top:343.30px;width:26.10px;height:23.96px;background:#ffffff;"></div>
<div class="b" style="left:551.50px;top:343.30px;width:205.90px;height:23.96px;background:#ebebeb;"></div>
<div class="b" style="left:757.40px;top:343.30px;width:66.10px;height:23.96px;background:#ebebeb;"></div>
<div class="b" style="left:525.40px;top:367.96px;width:26.10px;height:23.96px;background:#ffffff;"></div>
<div class="b" style="left:551.50px;top:367.96px;width:205.90px;height:23.96px;background:#ebebeb;"></div>
<div class="b" style="left:757.40px;top:367.96px;width:66.10px;height:23.96px;background:#ebebeb;"></div>
<div class="b" style="left:525.40px;top:392.62px;width:26.10px;height:23.96px;background:#ffffff;"></div>
<div class="b" style="left:551.50px;top:392.62px;width:205.90px;height:23.96px;background:#ebebeb;"></div>
<div class="b" style="left:757.40px;top:392.62px;width:66.10px;height:23.96px;background:#ebebeb;"></div>
<div class="b" style="left:525.40px;top:417.28px;width:26.10px;height:23.96px;background:#ffffff;"></div>
<div class="b" style="left:551.50px;top:417.28px;width:205.90px;height:23.96px;background:#ebebeb;"></div>
<div class="b" style="left:757.40px;top:417.28px;width:66.10px;height:23.96px;background:#ebebeb;"></div>
<div class="b" style="left:525.40px;top:441.94px;width:26.10px;height:23.96px;background:#ffffff;"></div>
<div class="b" style="left:551.50px;top:441.94px;width:205.90px;height:23.96px;background:#ebebeb;"></div>
<div class="b" style="left:757.40px;top:441.94px;width:66.10px;height:23.96px;background:#ebebeb;"></div>
<div class="b" style="left:525.40px;top:466.60px;width:26.10px;height:23.96px;background:#ffffff;"></div>
<div class="b" style="left:551.50px;top:466.60px;width:205.90px;height:23.96px;background:#ebebeb;"></div>
<div class="b" style="left:757.40px;top:466.60px;width:66.10px;height:23.96px;background:#ebebeb;"></div>
<div class="b" style="left:525.40px;top:491.26px;width:26.10px;height:23.96px;background:#ffffff;"></div>
<div class="b" style="left:551.50px;top:491.26px;width:205.90px;height:23.96px;background:#ebebeb;"></div>
<div class="b" style="left:757.40px;top:491.26px;width:66.10px;height:23.96px;background:#ebebeb;"></div>
<div class="b" style="left:525.40px;top:515.92px;width:26.10px;height:23.96px;background:#ffffff;"></div>
<div class="b" style="left:551.50px;top:515.92px;width:205.90px;height:23.96px;background:#ebebeb;"></div>
<div class="b" style="left:757.40px;top:515.92px;width:66.10px;height:23.96px;background:#ebebeb;"></div>
<div class="b" style="left:525.40px;top:540.58px;width:26.10px;height:23.96px;background:#ffffff;"></div>
<div class="b" style="left:551.50px;top:540.58px;width:205.90px;height:23.96px;background:#ebebeb;"></div>
<div class="b" style="left:757.40px;top:540.58px;width:66.10px;height:23.96px;background:#ebebeb;"></div>
<div class="b" style="left:525.40px;top:565.24px;width:26.10px;height:23.96px;background:#ffffff;"></div>
<div class="b" style="left:551.50px;top:565.24px;width:205.90px;height:23.96px;background:#ebebeb;"></div>
<div class="b" style="left:757.40px;top:565.24px;width:66.10px;height:23.96px;background:#ebebeb;"></div>
<div class="b" style="left:525.40px;top:589.90px;width:26.10px;height:23.96px;background:#ffffff;"></div>
<div class="b" style="left:551.50px;top:589.90px;width:205.90px;height:23.96px;background:#ebebeb;"></div>
<div class="b" style="left:757.40px;top:589.90px;width:66.10px;height:23.96px;background:#ebebeb;"></div>
<div class="b" style="left:525.40px;top:614.56px;width:26.10px;height:23.96px;background:#ffffff;"></div>
<div class="b" style="left:551.50px;top:614.56px;width:205.90px;height:23.96px;background:#ebebeb;"></div>
<div class="b" style="left:757.40px;top:614.56px;width:66.10px;height:23.96px;background:#ebebeb;"></div>
<div class="b" style="left:525.40px;top:639.22px;width:26.10px;height:23.96px;background:#ffffff;"></div>
<div class="b" style="left:551.50px;top:639.22px;width:205.90px;height:23.96px;background:#ebebeb;"></div>
<div class="b" style="left:757.40px;top:639.22px;width:66.10px;height:23.96px;background:#ebebeb;"></div>
<div class="b" style="left:525.40px;top:663.88px;width:26.10px;height:23.96px;background:#ffffff;"></div>
<div class="b" style="left:551.50px;top:663.88px;width:205.90px;height:23.96px;background:#ebebeb;"></div>
<div class="b" style="left:757.40px;top:663.88px;width:66.10px;height:23.96px;background:#ebebeb;"></div>
<div class="b" style="left:525.40px;top:688.54px;width:26.10px;height:23.96px;background:#ffffff;"></div>
<div class="b" style="left:551.50px;top:688.54px;width:205.90px;height:23.96px;background:#ebebeb;"></div>
<div class="b" style="left:757.40px;top:688.54px;width:66.10px;height:23.96px;background:#ebebeb;"></div>
<div class="b" style="left:525.40px;top:713.20px;width:26.10px;height:23.96px;background:#ffffff;"></div>
<div class="b" style="left:551.50px;top:713.20px;width:205.90px;height:23.96px;background:#ebebeb;"></div>
<div class="b" style="left:757.40px;top:713.20px;width:66.10px;height:23.96px;background:#ebebeb;"></div>
<div class="b" style="left:526.40px;top:366.96px;width:297.10px;height:1.00px;background:#e6e6e6;"></div>
<div class="b" style="left:526.40px;top:391.62px;width:297.10px;height:1.00px;background:#e6e6e6;"></div>
<div class="b" style="left:526.40px;top:416.28px;width:297.10px;height:1.00px;background:#e6e6e6;"></div>
<div class="b" style="left:526.40px;top:440.94px;width:297.10px;height:1.00px;background:#e6e6e6;"></div>
<div class="b" style="left:526.40px;top:465.60px;width:297.10px;height:1.00px;background:#e6e6e6;"></div>
<div class="b" style="left:526.40px;top:490.26px;width:297.10px;height:1.00px;background:#e6e6e6;"></div>
<div class="b" style="left:526.40px;top:514.92px;width:297.10px;height:1.00px;background:#e6e6e6;"></div>
<div class="b" style="left:526.40px;top:539.58px;width:297.10px;height:1.00px;background:#e6e6e6;"></div>
<div class="b" style="left:526.40px;top:564.24px;width:297.10px;height:1.00px;background:#e6e6e6;"></div>
<div class="b" style="left:526.40px;top:588.90px;width:297.10px;height:1.00px;background:#e6e6e6;"></div>
<div class="b" style="left:526.40px;top:613.56px;width:297.10px;height:1.00px;background:#e6e6e6;"></div>
<div class="b" style="left:526.40px;top:638.22px;width:297.10px;height:1.00px;background:#e6e6e6;"></div>
<div class="b" style="left:526.40px;top:662.88px;width:297.10px;height:1.00px;background:#e6e6e6;"></div>
<div class="b" style="left:526.40px;top:687.54px;width:297.10px;height:1.00px;background:#e6e6e6;"></div>
<div class="b" style="left:526.40px;top:712.20px;width:297.10px;height:1.00px;background:#e6e6e6;"></div>
<div class="b" style="left:551.20px;top:311.60px;width:1.00px;height:425.76px;background:#e3e3e3;"></div>
<div class="b" style="left:757.10px;top:311.60px;width:1.00px;height:425.76px;background:#e3e3e3;"></div>
<div class="b" style="left:823.50px;top:311.60px;width:1.00px;height:425.76px;background:#7f7f7f;"></div>
<div class="b" style="left:843.00px;top:343.30px;width:10.60px;height:394.06px;background:#ffffff;"></div>
<div class="b" style="left:843.00px;top:519.00px;width:10.60px;height:23.80px;background:#959595;"></div>
<svg class="b" style="left:843.30px;top:345.60px;" width="11" height="20" viewBox="0 0 11 20"><path d="M2.3 5.2 L5.5 2 L8.7 5.2 M2.3 13.6 L5.5 16.8 L8.7 13.6" fill="none" stroke="#2a72c2" stroke-width="1.3"/></svg>
<svg class="b" style="left:843.30px;top:714.36px;" width="11" height="20" viewBox="0 0 11 20"><path d="M2.3 5.6 L5.5 2.4 L8.7 5.6 M2.3 14 L5.5 17.2 L8.7 14" fill="none" stroke="#2a72c2" stroke-width="1.3"/></svg>
<div class="t" style="left:557.90px;top:320.29px;font:normal 13.6px/13.6px 'Liberation Sans', sans-serif;color:#32363a;">Content</div>
<div class="t" style="left:760.00px;top:320.29px;font:normal 13.6px/13.6px 'Liberation Sans', sans-serif;color:#32363a;">Lngth</div>
<div class="b" style="left:530.50px;top:349.30px;width:13.00px;height:13.00px;background:#ffffff;box-sizing:border-box;border:1px solid #a8a8a8;border-radius:1.5px;"></div>
<div class="t" style="left:551.70px;top:348.62px;font:normal 13.8px/13.8px 'Liberation Sans', sans-serif;color:#32363a;">General Ledger Amount</div>
<div class="t" style="left:758.00px;top:348.62px;font:normal 13.8px/13.8px 'Liberation Sans', sans-serif;color:#32363a;">20</div>
<div class="b" style="left:530.50px;top:373.96px;width:13.00px;height:13.00px;background:#ffffff;box-sizing:border-box;border:1px solid #a8a8a8;border-radius:1.5px;"></div>
<div class="t" style="left:551.70px;top:373.28px;font:normal 13.8px/13.8px 'Liberation Sans', sans-serif;color:#32363a;">Negative Posting</div>
<div class="t" style="left:758.00px;top:373.28px;font:normal 13.8px/13.8px 'Liberation Sans', sans-serif;color:#32363a;">2</div>
<div class="b" style="left:530.50px;top:398.62px;width:13.00px;height:13.00px;background:#ffffff;box-sizing:border-box;border:1px solid #a8a8a8;border-radius:1.5px;"></div>
<div class="t" style="left:551.70px;top:397.94px;font:normal 13.8px/13.8px 'Liberation Sans', sans-serif;color:#32363a;">Fixed</div>
<div class="t" style="left:758.00px;top:397.94px;font:normal 13.8px/13.8px 'Liberation Sans', sans-serif;color:#32363a;">7</div>
<div class="b" style="left:530.50px;top:423.28px;width:13.00px;height:13.00px;background:#ffffff;box-sizing:border-box;border:1px solid #a8a8a8;border-radius:1.5px;"></div>
<div class="t" style="left:551.70px;top:422.60px;font:normal 13.8px/13.8px 'Liberation Sans', sans-serif;color:#32363a;">Payment Card Item</div>
<div class="t" style="left:758.00px;top:422.60px;font:normal 13.8px/13.8px 'Liberation Sans', sans-serif;color:#32363a;">3</div>
<div class="b" style="left:530.50px;top:447.94px;width:13.00px;height:13.00px;background:#ffffff;box-sizing:border-box;border:1px solid #a8a8a8;border-radius:1.5px;"></div>
<div class="t" style="left:551.70px;top:447.26px;font:normal 13.8px/13.8px 'Liberation Sans', sans-serif;color:#32363a;">Settlement run</div>
<div class="t" style="left:758.00px;top:447.26px;font:normal 13.8px/13.8px 'Liberation Sans', sans-serif;color:#32363a;">10</div>
<div class="b" style="left:530.50px;top:472.60px;width:13.00px;height:13.00px;background:#ffffff;box-sizing:border-box;border:1px solid #a8a8a8;border-radius:1.5px;"></div>
<div class="t" style="left:551.70px;top:471.92px;font:normal 13.8px/13.8px 'Liberation Sans', sans-serif;color:#32363a;">Credit Control Area</div>
<div class="t" style="left:758.00px;top:471.92px;font:normal 13.8px/13.8px 'Liberation Sans', sans-serif;color:#32363a;">4</div>
<div class="b" style="left:530.50px;top:497.26px;width:13.00px;height:13.00px;background:#ffffff;box-sizing:border-box;border:1px solid #a8a8a8;border-radius:1.5px;"></div>
<div class="t" style="left:551.70px;top:496.58px;font:normal 13.8px/13.8px 'Liberation Sans', sans-serif;color:#32363a;">Reference Key 3</div>
<div class="t" style="left:758.00px;top:496.58px;font:normal 13.8px/13.8px 'Liberation Sans', sans-serif;color:#32363a;">20</div>
<div class="b" style="left:530.50px;top:521.92px;width:13.00px;height:13.00px;background:#ffffff;box-sizing:border-box;border:1px solid #a8a8a8;border-radius:1.5px;"></div>
<div class="t" style="left:551.70px;top:521.24px;font:normal 13.8px/13.8px 'Liberation Sans', sans-serif;color:#32363a;">Instruction Key 1</div>
<div class="t" style="left:758.00px;top:521.24px;font:normal 13.8px/13.8px 'Liberation Sans', sans-serif;color:#32363a;">3</div>
<div class="b" style="left:530.50px;top:546.58px;width:13.00px;height:13.00px;background:#ffffff;box-sizing:border-box;border:1px solid #a8a8a8;border-radius:1.5px;"></div>
<div class="t" style="left:551.70px;top:545.90px;font:normal 13.8px/13.8px 'Liberation Sans', sans-serif;color:#32363a;">Instruction Key 2</div>
<div class="t" style="left:758.00px;top:545.90px;font:normal 13.8px/13.8px 'Liberation Sans', sans-serif;color:#32363a;">2</div>
<div class="b" style="left:530.50px;top:571.24px;width:13.00px;height:13.00px;background:#ffffff;box-sizing:border-box;border:1px solid #a8a8a8;border-radius:1.5px;"></div>
<div class="t" style="left:551.70px;top:570.56px;font:normal 13.8px/13.8px 'Liberation Sans', sans-serif;color:#32363a;">Instruction key 3</div>
<div class="t" style="left:758.00px;top:570.56px;font:normal 13.8px/13.8px 'Liberation Sans', sans-serif;color:#32363a;">2</div>
<div class="b" style="left:530.50px;top:595.90px;width:13.00px;height:13.00px;background:#ffffff;box-sizing:border-box;border:1px solid #a8a8a8;border-radius:1.5px;"></div>
<div class="t" style="left:551.70px;top:595.22px;font:normal 13.8px/13.8px 'Liberation Sans', sans-serif;color:#32363a;">Instruction key 4</div>
<div class="t" style="left:758.00px;top:595.22px;font:normal 13.8px/13.8px 'Liberation Sans', sans-serif;color:#32363a;">2</div>
<div class="b" style="left:530.50px;top:620.56px;width:13.00px;height:13.00px;background:#ffffff;box-sizing:border-box;border:1px solid #a8a8a8;border-radius:1.5px;"></div>
<div class="t" style="left:551.70px;top:619.88px;font:normal 13.8px/13.8px 'Liberation Sans', sans-serif;color:#32363a;">Hedged Amount</div>
<div class="t" style="left:758.00px;top:619.88px;font:normal 13.8px/13.8px 'Liberation Sans', sans-serif;color:#32363a;">20</div>
<div class="b" style="left:530.50px;top:645.22px;width:13.00px;height:13.00px;background:#ffffff;box-sizing:border-box;border:1px solid #a8a8a8;border-radius:1.5px;"></div>
<div class="t" style="left:551.70px;top:644.54px;font:normal 13.8px/13.8px 'Liberation Sans', sans-serif;color:#32363a;">Credit Control Area Currency</div>
<div class="t" style="left:758.00px;top:644.54px;font:normal 13.8px/13.8px 'Liberation Sans', sans-serif;color:#32363a;">8</div>
<div class="b" style="left:530.50px;top:669.88px;width:13.00px;height:13.00px;background:#ffffff;box-sizing:border-box;border:1px solid #a8a8a8;border-radius:1.5px;"></div>
<div class="t" style="left:551.70px;top:669.20px;font:normal 13.8px/13.8px 'Liberation Sans', sans-serif;color:#32363a;">WBS Element</div>
<div class="t" style="left:758.00px;top:669.20px;font:normal 13.8px/13.8px 'Liberation Sans', sans-serif;color:#32363a;">24</div>
<div class="b" style="left:530.50px;top:694.54px;width:13.00px;height:13.00px;background:#ffffff;box-sizing:border-box;border:1px solid #a8a8a8;border-radius:1.5px;"></div>
<div class="t" style="left:551.70px;top:693.86px;font:normal 13.8px/13.8px 'Liberation Sans', sans-serif;color:#32363a;">Payment Sent</div>
<div class="t" style="left:758.00px;top:693.86px;font:normal 13.8px/13.8px 'Liberation Sans', sans-serif;color:#32363a;">2</div>
<div class="b" style="left:530.50px;top:719.20px;width:13.00px;height:13.00px;background:#ffffff;box-sizing:border-box;border:1px solid #a8a8a8;border-radius:1.5px;"></div>
<div class="t" style="left:551.70px;top:718.52px;font:normal 13.8px/13.8px 'Liberation Sans', sans-serif;color:#32363a;">Payment reference</div>
<div class="t" style="left:758.00px;top:718.52px;font:normal 13.8px/13.8px 'Liberation Sans', sans-serif;color:#32363a;">30</div>
<div class="b" style="left:485.50px;top:441.20px;width:29.50px;height:26.80px;background:#ffffff;box-sizing:border-box;border:1.5px solid #3d7bc0;border-radius:5px;"></div>
<svg class="b" style="left:491.25px;top:445.60px;" width="18" height="18" viewBox="-9.0 -9.0 18 18"><g fill="none" stroke="#0b5aa8" stroke-width="1.3" stroke-linecap="butt" stroke-linejoin="miter"><path d="M-6.3 -4.6 L-0.3 0 L-6.3 4.6 M-0.8 -4.6 L5.2 0 L-0.8 4.6" stroke-width="1.5"/></g></svg>
<div class="b" style="left:485.50px;top:473.40px;width:29.50px;height:26.60px;background:#ffffff;box-sizing:border-box;border:1.5px solid #3d7bc0;border-radius:5px;"></div>
<svg class="b" style="left:491.25px;top:477.70px;" width="18" height="18" viewBox="-9.0 -9.0 18 18"><g fill="none" stroke="#0b5aa8" stroke-width="1.3" stroke-linecap="butt" stroke-linejoin="miter"><path d="M-2 -5.5 L3 0 L-2 5.5" stroke-width="1.1"/></g></svg>
<div class="b" style="left:485.50px;top:537.40px;width:29.50px;height:26.60px;background:#ffffff;box-sizing:border-box;border:1.5px solid #3d7bc0;border-radius:5px;"></div>
<svg class="b" style="left:491.25px;top:541.70px;" width="18" height="18" viewBox="-9.0 -9.0 18 18"><g fill="none" stroke="#0b5aa8" stroke-width="1.3" stroke-linecap="butt" stroke-linejoin="miter"><path d="M2 -5.5 L-3 0 L2 5.5" stroke-width="1.1"/></g></svg>
<div class="b" style="left:485.50px;top:569.40px;width:29.50px;height:27.00px;background:#ffffff;box-sizing:border-box;border:1.5px solid #3d7bc0;border-radius:5px;"></div>
<svg class="b" style="left:491.25px;top:573.90px;" width="18" height="18" viewBox="-9.0 -9.0 18 18"><g fill="none" stroke="#0b5aa8" stroke-width="1.3" stroke-linecap="butt" stroke-linejoin="miter"><path d="M6.3 -4.6 L0.3 0 L6.3 4.6 M0.8 -4.6 L-5.2 0 L0.8 4.6" stroke-width="1.5"/></g></svg>
<div class="b" style="left:535.40px;top:761.10px;width:29.10px;height:27.30px;background:#ffffff;box-sizing:border-box;border:1.5px solid #3d7bc0;border-radius:5px;"></div>
<svg class="b" style="left:540.95px;top:765.75px;" width="18" height="18" viewBox="-9.0 -9.0 18 18"><g fill="none" stroke="#0b5aa8" stroke-width="1.3" stroke-linecap="butt" stroke-linejoin="miter"><path d="M-2.8 -3.6 H2.8 M-4.3 -0.7 H4.3 M-5.9 2.5 H5.9 M-7.3 5.4 H7.3" stroke-width="1"/></g></svg>
<div class="b" style="left:565.60px;top:761.10px;width:29.10px;height:27.30px;background:#ffffff;box-sizing:border-box;border:1.5px solid #3d7bc0;border-radius:5px;"></div>
<svg class="b" style="left:571.15px;top:765.75px;" width="18" height="18" viewBox="-9.0 -9.0 18 18"><g fill="none" stroke="#0b5aa8" stroke-width="1.3" stroke-linecap="butt" stroke-linejoin="miter"><path d="M-7.3 -3.6 H7.3 M-5.9 -0.7 H5.9 M-4.3 2.5 H4.3 M-2.8 5.4 H2.8" stroke-width="1"/></g></svg>
<div class="b" style="left:595.80px;top:761.10px;width:29.10px;height:27.30px;background:#ffffff;box-sizing:border-box;border:1.5px solid #3d7bc0;border-radius:5px;"></div>
<svg class="b" style="left:601.35px;top:765.75px;" width="18" height="18" viewBox="-9.0 -9.0 18 18"><g fill="none" stroke="#0b5aa8" stroke-width="1.3" stroke-linecap="butt" stroke-linejoin="miter"><circle cx="-1.4" cy="-1.4" r="4.9" stroke-width="1.1"/><path d="M2.2 2.4 L6.6 6.4" stroke-width="1.9"/></g></svg>
<div class="b" style="left:626.00px;top:761.10px;width:29.10px;height:27.30px;background:#ffffff;box-sizing:border-box;border:1.5px solid #3d7bc0;border-radius:5px;"></div>
<svg class="b" style="left:631.55px;top:765.75px;" width="18" height="18" viewBox="-9.0 -9.0 18 18"><g fill="none" stroke="#0b5aa8" stroke-width="1.3" stroke-linecap="butt" stroke-linejoin="miter"><circle cx="-3" cy="0" r="4.4" stroke-width="1.1"/><path d="M0.4 3.3 L4.5 6.8" stroke-width="1.9"/><path d="M4 -7.2 V-1.7 M1.3 -4.4 H6.8" stroke-width="1.1"/></g></svg>
<div class="t" style="right:1603.40px;top:768.99px;font:normal 13.6px/13.6px 'Liberation Sans', sans-serif;color:#5a5e62;">Line width:</div>
<div class="b" style="left:315.20px;top:762.00px;width:49.50px;height:25.20px;background:#f2f2f2;box-sizing:border-box;border:1px solid #b4b4b4;"></div>
<div class="t" style="right:1552.20px;top:769.47px;font:normal 14px/14px 'Liberation Mono', monospace;color:#32363a;">140</div>
<div class="b" style="left:35.00px;top:813.50px;width:440.00px;height:1.00px;background:#e5e5e5;"></div>
<div class="t" style="right:1603.40px;top:832.49px;font:normal 13.6px/13.6px 'Liberation Sans', sans-serif;color:#5a5e62;">List Width:</div>
<div class="b" style="left:315.20px;top:826.00px;width:49.50px;height:25.50px;background:#f2f2f2;box-sizing:border-box;border:1px solid #b4b4b4;"></div>
<div class="t" style="right:1552.20px;top:833.27px;font:normal 14px/14px 'Liberation Mono', monospace;color:#32363a;">140</div>
<div class="b" style="left:5.00px;top:885.50px;width:887.00px;height:1.00px;background:#e5e5e5;"></div>
<svg class="b" style="left:686.50px;top:896.70px;" width="18" height="18" viewBox="-9.0 -9.0 18 18"><g fill="none" stroke="#107e3e" stroke-width="2.2" stroke-linecap="butt" stroke-linejoin="miter"><path d="M-6 0.5 L-2 5.5 L6 -6"/></g></svg>
<div class="t" style="left:709.60px;top:900.04px;font:normal 13.3px/13.3px 'Liberation Sans', sans-serif;color:#0b5aa8;">Copy</div>
<svg class="b" style="left:757.80px;top:897.60px;" width="18" height="18" viewBox="-9.0 -9.0 18 18"><g fill="none" stroke="#0b5aa8" stroke-width="1.2" stroke-linecap="butt" stroke-linejoin="miter"><path d="M-6.3 -0.5 A6.3 6.3 0 0 1 5.2 -3.8"/><path d="M2.6 -4.2 L5.6 -3.6 L6 -6.8"/><path d="M6.3 0.5 A6.3 6.3 0 0 1 -5.2 3.8"/><path d="M-2.6 4.2 L-5.6 3.6 L-6 6.8"/></g></svg>
<svg class="b" style="left:792.80px;top:897.50px;" width="18" height="18" viewBox="-9.0 -9.0 18 18"><g fill="none" stroke="#0b5aa8" stroke-width="1.2" stroke-linecap="butt" stroke-linejoin="miter"><circle cx="-4.2" cy="4.3" r="2.6"/><circle cx="4.2" cy="4.3" r="2.6"/><path d="M-2.8 2 L4.5 -7.5 M2.8 2 L-4.5 -7.5"/></g></svg>
<svg class="b" style="left:827.20px;top:897.40px;" width="18" height="18" viewBox="-9.0 -9.0 18 18"><g fill="none" stroke="#0b5aa8" stroke-width="1" stroke-linecap="butt" stroke-linejoin="miter"><rect x="-8" y="-7.5" width="4.6" height="15" fill="#0b5aa8" stroke="none"/><rect x="-7" y="-2.5" width="2.6" height="3.4" fill="#fff" stroke="none"/><rect x="-3.4" y="-2.7" width="3.8" height="3.8" stroke-width="1"/><path d="M0.4 -0.8 H4 V6.5 M2.3 4.6 L4 6.6 L5.7 4.6" stroke-width="1"/></g></svg>
<svg class="b" style="left:862.00px;top:897.40px;" width="18" height="18" viewBox="-9.0 -9.0 18 18"><g fill="none" stroke="#cc0000" stroke-width="2.2" stroke-linecap="butt" stroke-linejoin="miter"><path d="M-6.2 -6.2 L6.2 6.2 M6.2 -6.2 L-6.2 6.2"/></g></svg>
</body></html>
